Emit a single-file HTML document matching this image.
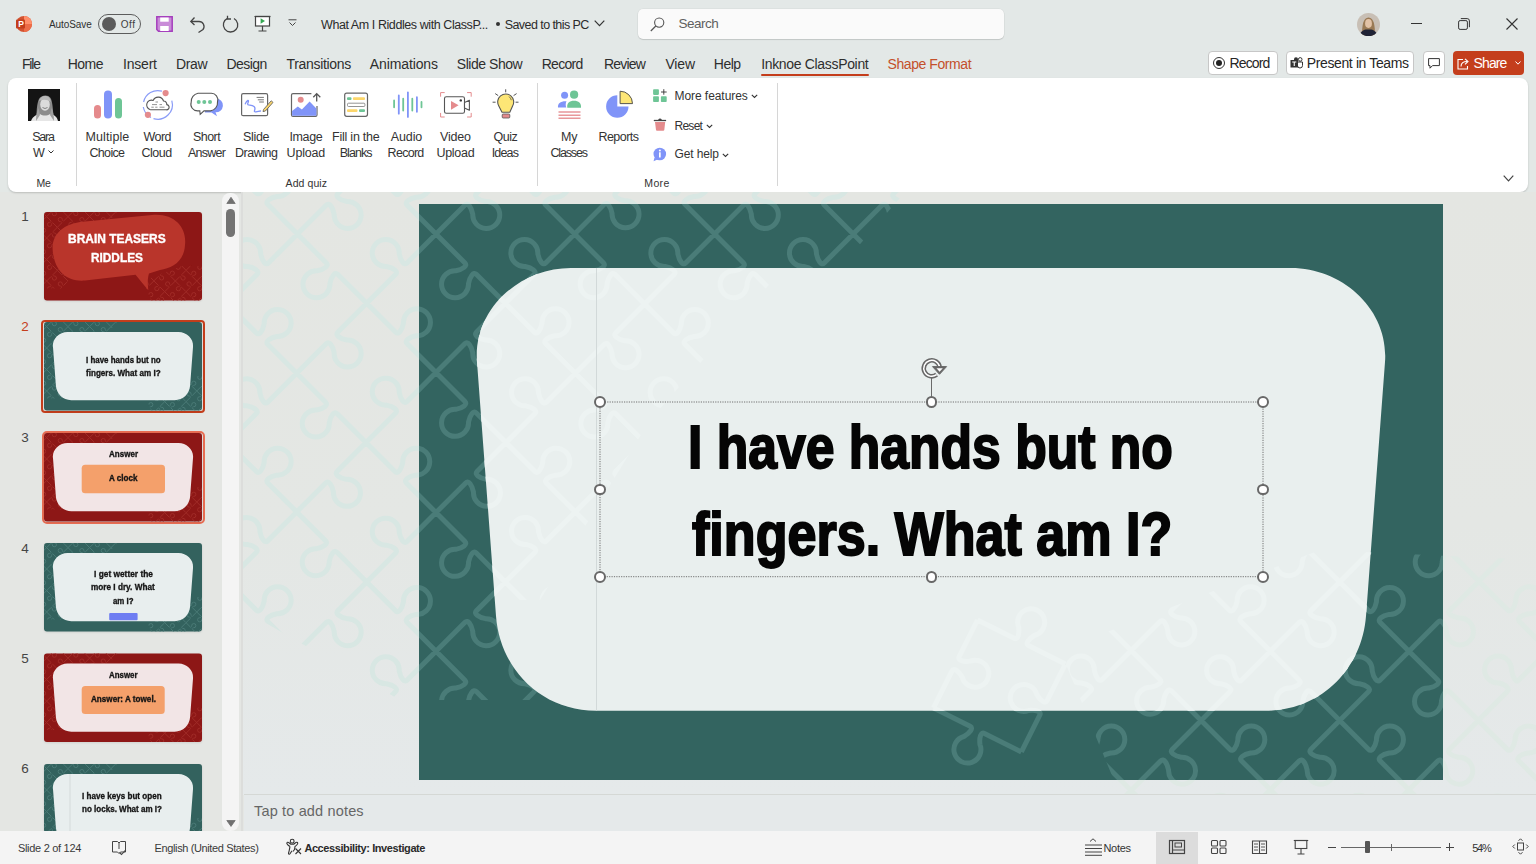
<!DOCTYPE html><html><head><meta charset="utf-8"><style>
*{margin:0;padding:0;box-sizing:border-box}
html,body{width:1536px;height:864px;overflow:hidden;background:#e3e8e6;font-family:"Liberation Sans",sans-serif}
.t{position:absolute;white-space:nowrap}
.a{position:absolute}
svg{position:absolute;overflow:visible}
</style></head><body>
<div class="a" style="left:0;top:0;width:1536px;height:80px;background:#e3e8e7"></div>
<div class="a" style="left:0;top:192px;width:244px;height:640px;background:#e4e6e3"></div>
<div class="a" style="left:244px;top:192px;width:1292px;height:640px;background:#e6e8e4"></div>
<div class="a" style="left:8px;top:78px;width:1520px;height:114px;background:#fff;border-radius:8px;box-shadow:0 1px 2px rgba(0,0,0,.18)"></div>
<svg style="left:16px;top:16px" width="16" height="16" viewBox="0 0 16 16">
<circle cx="8" cy="8" r="8" fill="#d35230"/>
<path d="M8 0A8 8 0 0 1 16 8H8Z" fill="#ff8f6b"/>
<path d="M16 8A8 8 0 0 1 8 16V8Z" fill="#ed6c47"/>
<rect x="0" y="3.5" width="9" height="9" rx="1" fill="#c43e1c"/>
<text x="2.2" y="11" font-size="8.5" font-weight="700" fill="#fff" font-family="Liberation Sans">P</text>
</svg>
<div class="t" style="left:49.0px;top:18px;font-size:10px;line-height:13px;letter-spacing:-0.095px;color:#303030;font-weight:400;">AutoSave</div>
<div class="a" style="left:98px;top:13.5px;width:43px;height:20px;border:1px solid #5c5c5c;border-radius:10px"></div>
<div class="a" style="left:102px;top:16.5px;width:14px;height:14px;background:#5b5b5b;border-radius:7px"></div>
<div class="t" style="left:120.8px;top:18px;font-size:10px;line-height:13px;letter-spacing:0.523px;color:#404040;font-weight:400;">Off</div>
<svg style="left:156px;top:16px" width="17" height="16" viewBox="0 0 17 16">
<path d="M0.8 0.8H16.2V15.2H2.5L0.8 13.5Z" fill="#c98bd8" stroke="#a53fbd" stroke-width="1.5"/>
<rect x="4.2" y="1.5" width="8.5" height="4.2" fill="#fff"/>
<rect x="4.2" y="10" width="8.5" height="5" fill="#fff"/>
</svg>
<svg style="left:189px;top:15px" width="18" height="18" viewBox="0 0 18 18">
<path d="M2 6.5H10A5 5 0 0 1 14 14.5L9.5 17.5" fill="none" stroke="#444" stroke-width="1.3"/>
<path d="M5.5 2.5L1.8 6.5L5.5 10" fill="none" stroke="#444" stroke-width="1.3"/>
</svg>
<svg style="left:221px;top:15px" width="19" height="19" viewBox="0 0 19 19">
<path d="M6.5 3.3A7.2 7.2 0 1 0 13 3.5" fill="none" stroke="#444" stroke-width="1.3"/>
<path d="M6.5 0.8V4H10" fill="none" stroke="#444" stroke-width="1.3"/>
</svg>
<svg style="left:254px;top:15px" width="17" height="17" viewBox="0 0 17 17">
<rect x="1.5" y="1.5" width="14" height="9.5" fill="#fff" stroke="#444" stroke-width="1.2"/>
<path d="M0.5 1.5H16.5" stroke="#444" stroke-width="1.2"/>
<path d="M6.6 3.2L11 6L6.6 8.8Z" fill="#34a853"/>
<path d="M8.5 11V16M4.5 16H12.5" stroke="#444" stroke-width="1.2"/>
</svg>
<svg style="left:288px;top:19px" width="9" height="8" viewBox="0 0 9 8">
<path d="M0.5 0.8H8.5" stroke="#444" stroke-width="1"/>
<path d="M1.5 3.5L4.5 6.5L7.5 3.5" fill="none" stroke="#444" stroke-width="1"/>
</svg>
<div class="t" style="left:321.0px;top:17px;font-size:12.5px;line-height:16px;letter-spacing:-0.422px;color:#2b2b2b;font-weight:400;">What Am I Riddles with ClassP...</div>
<div class="a" style="left:495.5px;top:21.5px;width:4px;height:4px;border-radius:2px;background:#333"></div>
<div class="t" style="left:504.7px;top:17px;font-size:12.5px;line-height:16px;letter-spacing:-0.560px;color:#2b2b2b;font-weight:400;">Saved to this PC</div>
<svg style="left:594px;top:20px" width="11" height="7" viewBox="0 0 11 7">
<path d="M0.7 0.7L5.5 5.7L10.3 0.7" fill="none" stroke="#333" stroke-width="1.2"/></svg>
<div class="a" style="left:638px;top:9px;width:366px;height:30px;background:#fafafa;border-radius:5px;box-shadow:0 1px 1px rgba(0,0,0,.12),0 0 0 0.5px rgba(0,0,0,.06)"></div>
<svg style="left:650px;top:17px" width="15" height="15" viewBox="0 0 15 15">
<circle cx="9.2" cy="5.6" r="4.6" fill="none" stroke="#555" stroke-width="1.1"/>
<path d="M5.8 9L0.8 14" stroke="#555" stroke-width="1.2"/></svg>
<div class="t" style="left:678.4px;top:15px;font-size:13.5px;line-height:17px;letter-spacing:-0.475px;color:#606060;font-weight:400;">Search</div>
<svg style="left:1357px;top:12.5px" width="23" height="23" viewBox="0 0 23 23">
<defs><clipPath id="av"><circle cx="11.5" cy="11.5" r="11.5"/></clipPath></defs>
<g clip-path="url(#av)"><rect width="23" height="23" fill="#c8bfb5"/>
<path d="M5 23C5 12 6 5 11.5 4.5C17 5 18 12 18 23Z" fill="#9a7a55"/>
<ellipse cx="11.5" cy="10.5" rx="3.4" ry="4.4" fill="#e2c2a6"/>
<path d="M2 23C4 17 8 16 11.5 16.5C15 16 19 17 21 23Z" fill="#1f2235"/></g></svg>
<div class="a" style="left:1411px;top:23px;width:10.5px;height:1px;background:#333"></div>
<svg style="left:1458px;top:18px" width="12" height="12" viewBox="0 0 12 12">
<rect x="0.6" y="2.6" width="8.8" height="8.8" rx="1.5" fill="none" stroke="#333" stroke-width="1"/>
<path d="M2.8 0.6H9.2A2.2 2.2 0 0 1 11.4 2.8V9.2" fill="none" stroke="#333" stroke-width="1"/></svg>
<svg style="left:1506px;top:18px" width="12" height="12" viewBox="0 0 12 12">
<path d="M0.5 0.5L11.5 11.5M11.5 0.5L0.5 11.5" stroke="#333" stroke-width="1.1"/></svg>
<div class="t" style="left:21.9px;top:55px;font-size:14px;line-height:18px;letter-spacing:-1.153px;color:#2e2e2e;font-weight:400;">File</div>
<div class="t" style="left:67.7px;top:55px;font-size:14px;line-height:18px;letter-spacing:-0.482px;color:#2e2e2e;font-weight:400;">Home</div>
<div class="t" style="left:123.0px;top:55px;font-size:14px;line-height:18px;letter-spacing:-0.203px;color:#2e2e2e;font-weight:400;">Insert</div>
<div class="t" style="left:176.0px;top:55px;font-size:14px;line-height:18px;letter-spacing:-0.390px;color:#2e2e2e;font-weight:400;">Draw</div>
<div class="t" style="left:226.5px;top:55px;font-size:14px;line-height:18px;letter-spacing:-0.536px;color:#2e2e2e;font-weight:400;">Design</div>
<div class="t" style="left:286.5px;top:55px;font-size:14px;line-height:18px;letter-spacing:-0.315px;color:#2e2e2e;font-weight:400;">Transitions</div>
<div class="t" style="left:369.8px;top:55px;font-size:14px;line-height:18px;letter-spacing:-0.117px;color:#2e2e2e;font-weight:400;">Animations</div>
<div class="t" style="left:456.8px;top:55px;font-size:14px;line-height:18px;letter-spacing:-0.460px;color:#2e2e2e;font-weight:400;">Slide Show</div>
<div class="t" style="left:541.7px;top:55px;font-size:14px;line-height:18px;letter-spacing:-0.707px;color:#2e2e2e;font-weight:400;">Record</div>
<div class="t" style="left:604.0px;top:55px;font-size:14px;line-height:18px;letter-spacing:-0.821px;color:#2e2e2e;font-weight:400;">Review</div>
<div class="t" style="left:665.4px;top:55px;font-size:14px;line-height:18px;letter-spacing:-0.164px;color:#2e2e2e;font-weight:400;">View</div>
<div class="t" style="left:713.8px;top:55px;font-size:14px;line-height:18px;letter-spacing:-0.531px;color:#2e2e2e;font-weight:400;">Help</div>
<div class="t" style="left:761.2px;top:55px;font-size:14px;line-height:18px;letter-spacing:-0.331px;color:#2e2e2e;font-weight:400;">Inknoe ClassPoint</div>
<div class="t" style="left:887.5px;top:55px;font-size:14px;line-height:18px;letter-spacing:-0.419px;color:#c4502b;font-weight:400;">Shape Format</div>
<div class="a" style="left:761px;top:73.5px;width:108px;height:2.5px;border-radius:1px;background:#c43e1c"></div>
<div class="a" style="left:1208.3px;top:51px;width:69.40000000000009px;height:24px;background:#fff;border:1px solid #c7c7c7;border-radius:4px"></div>
<div class="a" style="left:1212.7px;top:56.8px;width:12.5px;height:12.5px;border:1.1px solid #333;border-radius:7px"></div>
<div class="a" style="left:1215.7px;top:59.8px;width:6.5px;height:6.5px;background:#222;border-radius:4px"></div>
<div class="t" style="left:1229.5px;top:54px;font-size:14px;line-height:18px;letter-spacing:-0.846px;color:#262626;font-weight:400;">Record</div>
<div class="a" style="left:1285.8px;top:51px;width:128.60000000000014px;height:24px;background:#fff;border:1px solid #c7c7c7;border-radius:4px"></div>
<svg style="left:1290px;top:57px" width="13" height="12" viewBox="0 0 13 12">
<circle cx="10.2" cy="2.4" r="1.8" fill="none" stroke="#333" stroke-width="1"/>
<path d="M7.5 5H12.5V8.5A2.5 2.5 0 0 1 7.5 8.5Z" fill="none" stroke="#333" stroke-width="1"/>
<circle cx="6" cy="2.2" r="2" fill="#333"/>
<rect x="0.5" y="3" width="7.5" height="7.5" fill="#333"/>
<path d="M2.2 5H6.3M4.25 5V9" stroke="#fff" stroke-width="1.1"/></svg>
<div class="t" style="left:1306.8px;top:54px;font-size:14px;line-height:18px;letter-spacing:-0.381px;color:#262626;font-weight:400;">Present in Teams</div>
<div class="a" style="left:1423px;top:51px;width:21.59999999999991px;height:24px;background:#fff;border:1px solid #c7c7c7;border-radius:4px"></div>
<svg style="left:1428px;top:57.5px" width="12" height="11" viewBox="0 0 12 11">
<path d="M0.6 0.6H11.4V7.6H4.5L2 10.2V7.6H0.6Z" fill="none" stroke="#333" stroke-width="1"/></svg>
<div class="a" style="left:1452.7px;top:51px;width:71px;height:24px;background:#c43e1c;border-radius:4px"></div>
<svg style="left:1457px;top:56.5px" width="13" height="13" viewBox="0 0 13 13">
<path d="M6 2.5H1V12H10.5V9" fill="none" stroke="#fff" stroke-width="1.1"/>
<path d="M4 9.5C4 6 6.5 4.5 10 4.5" fill="none" stroke="#fff" stroke-width="1.1"/>
<path d="M8 1.8L11 4.5L8 7.3" fill="none" stroke="#fff" stroke-width="1.1"/></svg>
<div class="t" style="left:1473.5px;top:54px;font-size:14px;line-height:18px;letter-spacing:-0.865px;color:#ffffff;font-weight:400;">Share</div>
<svg style="left:1514.5px;top:61px" width="6" height="4" viewBox="0 0 6 4">
<path d="M0.5 0.5L3 3.2L5.5 0.5" fill="none" stroke="#fff" stroke-width="1"/></svg>
<svg style="left:28px;top:89px" width="32" height="32" viewBox="0 0 32 32">
<rect width="32" height="32" fill="#141414"/>
<path d="M9,32C8,24 9,14 11,10C13,6 20,5 22.5,9C25,13 25,24 26,32Z" fill="#8c8c8c"/>
<ellipse cx="17" cy="15.5" rx="4.8" ry="6.2" fill="#dcdcdc"/>
<path d="M11,12C12,8 15,6.5 18,7C21,7.5 23,10 22.5,13C20,10.5 15,10 11,12Z" fill="#b8b8b8"/>
<path d="M3,32C5,27 9,25.5 12,25C15,27 19,27 22,25C25,25.5 29,27 30,32Z" fill="#e6e6e6"/>
<path d="M8,32C8,26 9,22 10.5,19L12,26ZM26,32C26,26 25,22 23.5,19L22,26Z" fill="#a0a0a0"/>
<path d="M14.5,18.5Q17,20.5 19.5,18.5" stroke="#777" stroke-width=".9" fill="none"/>
</svg>
<div class="t" style="left:32.3px;top:129px;font-size:12.5px;line-height:16px;letter-spacing:-1.268px;color:#333333;font-weight:400;">Sara</div>
<div class="t" style="left:33.0px;top:145px;font-size:12.5px;line-height:16px;letter-spacing:-0.798px;color:#333333;font-weight:400;">W</div>
<svg style="left:48px;top:150px" width="6" height="4" viewBox="0 0 6 4"><path d="M0.5 0.5L3 3L5.5 0.5" fill="none" stroke="#333" stroke-width="1"/></svg>
<div class="t" style="left:36.5px;top:176px;font-size:10.5px;line-height:14px;letter-spacing:-0.287px;color:#333;font-weight:400;">Me</div>
<div class="a" style="left:75.5px;top:83px;width:1px;height:103px;background:#d6d6d6"></div>
<div class="a" style="left:537px;top:83px;width:1px;height:103px;background:#d6d6d6"></div>
<div class="a" style="left:777px;top:83px;width:1px;height:103px;background:#d6d6d6"></div>
<svg style="left:90px;top:88px" width="36" height="34" viewBox="90 88 36 34">
<rect x="94" y="105" width="7" height="13.5" rx="3.5" fill="#e58a8c"/>
<rect x="104" y="90.4" width="8" height="28" rx="4" fill="#8094f8"/>
<rect x="115" y="98" width="7" height="20.5" rx="3.5" fill="#6ec596"/>
</svg>
<div class="t" style="left:85.5px;top:129px;font-size:12.5px;line-height:16px;letter-spacing:0.104px;color:#333333;font-weight:400;">Multiple</div>
<div class="t" style="left:89.5px;top:145px;font-size:12.5px;line-height:16px;letter-spacing:-0.682px;color:#333333;font-weight:400;">Choice</div>
<svg style="left:140px;top:88px" width="36" height="34" viewBox="140 88 36 34">
<path d="M162 91.2A14.6 14.6 0 0 0 143.6 102" fill="none" stroke="#8a9cf7" stroke-width="1.2"/>
<path d="M143.3 107A14.6 14.6 0 0 0 151 117.5" fill="none" stroke="#8a9cf7" stroke-width="1.2"/>
<path d="M153.5 118.6A14.6 14.6 0 0 0 171.8 100.6" fill="none" stroke="#8a9cf7" stroke-width="1.2"/>
<circle cx="165.6" cy="93.1" r="3.1" fill="#e48b8d"/>
<circle cx="147.9" cy="114.8" r="3.1" fill="#e48b8d"/>
<path d="M150.5 109.8H166.2A2.6 2.6 0 0 0 166.8 104.6A3.2 3.2 0 0 0 163.5 101A5.5 5.5 0 0 0 153.2 100.4A4.5 4.5 0 0 0 149.9 109.6Z" fill="#fff" stroke="#555" stroke-width="1.1"/>
<path d="M152 104.6H157M159.5 104.6H162M151.3 107.2H153.8M155.2 107.2H157.5M159.5 107.2H164.5M155.5 102H158" stroke="#777" stroke-width=".8"/>
</svg>
<div class="t" style="left:143.5px;top:129px;font-size:12.5px;line-height:16px;letter-spacing:-0.547px;color:#333333;font-weight:400;">Word</div>
<div class="t" style="left:141.4px;top:145px;font-size:12.5px;line-height:16px;letter-spacing:-0.440px;color:#333333;font-weight:400;">Cloud</div>
<svg style="left:188px;top:90px" width="38" height="30" viewBox="188 90 38 30">
<path d="M205 98.7H216A6.5 6.5 0 0 1 222.9 106A7 7 0 0 1 215.5 112.3L217 116.2L211.5 112.6H205Z" fill="#8094f8"/>
<path d="M198 93.3H211A6.5 6.5 0 0 1 217.5 101.8A8.2 8.2 0 0 1 210.5 110.9H204L200.2 114.3L199.8 110.9H197.8A6.7 6.7 0 0 1 191.2 102.1A8.3 8.3 0 0 1 198 93.3Z" fill="#fff" stroke="#555" stroke-width="1.1"/>
<circle cx="198.7" cy="101.9" r="2" fill="#6ec596"/><circle cx="204.3" cy="101.9" r="2" fill="#6ec596"/><circle cx="210" cy="101.9" r="2" fill="#6ec596"/>
</svg>
<div class="t" style="left:193.0px;top:129px;font-size:12.5px;line-height:16px;letter-spacing:-0.544px;color:#333333;font-weight:400;">Short</div>
<div class="t" style="left:188.0px;top:145px;font-size:12.5px;line-height:16px;letter-spacing:-0.737px;color:#333333;font-weight:400;">Answer</div>
<svg style="left:238px;top:90px" width="38" height="30" viewBox="238 90 38 30">
<rect x="241.6" y="93.7" width="26" height="22" rx="1.5" fill="#fff" stroke="#666" stroke-width="1.2"/>
<path d="M256.6 97.4H263.9M257.8 99.8H263.9M259.2 102H263.9" stroke="#666" stroke-width=".9"/>
<path d="M245.3 103.8C247 100 249.5 99 248 102.8C246.5 106.6 251 104 254 106.5C257 109 252 112 256 111.8C258 111.6 259 111 260.5 111" fill="none" stroke="#8094f8" stroke-width="1.3" stroke-linecap="round"/>
<path d="M263.6 109.4L271.2 100.8L273 102.4L265.4 111L263 111.6Z" fill="#fcd66b" stroke="#666" stroke-width=".9" stroke-linejoin="round"/>
</svg>
<div class="t" style="left:243.0px;top:129px;font-size:12.5px;line-height:16px;letter-spacing:-0.324px;color:#333333;font-weight:400;">Slide</div>
<div class="t" style="left:235.0px;top:145px;font-size:12.5px;line-height:16px;letter-spacing:-0.475px;color:#333333;font-weight:400;">Drawing</div>
<svg style="left:288px;top:90px" width="36" height="30" viewBox="288 90 36 30">
<path d="M311.4 93.6H293A1.5 1.5 0 0 0 291.5 95.1V115A1.5 1.5 0 0 0 293 116.4H315.6A1.5 1.5 0 0 0 317 115V106" fill="#fff" stroke="#666" stroke-width="1.2"/>
<path d="M292.1 115.8V111L297.8 106.4L301.9 109.6L309.6 101.4L316.4 108.5V115.8Z" fill="#8094f8"/>
<circle cx="300.7" cy="99.8" r="3" fill="#e48b8d"/>
<path d="M316.7 101.5V93.8M313.3 97.2L316.7 93.6L320.3 97.2" fill="none" stroke="#555" stroke-width="1.3"/>
</svg>
<div class="t" style="left:289.5px;top:129px;font-size:12.5px;line-height:16px;letter-spacing:-0.386px;color:#333333;font-weight:400;">Image</div>
<div class="t" style="left:286.6px;top:145px;font-size:12.5px;line-height:16px;letter-spacing:-0.183px;color:#333333;font-weight:400;">Upload</div>
<svg style="left:341px;top:90px" width="30" height="30" viewBox="341 90 30 30">
<rect x="344.7" y="93.1" width="22.8" height="23.2" rx="2" fill="#fff" stroke="#666" stroke-width="1.2"/>
<rect x="347" y="97.3" width="4.5" height="2.7" rx="1" fill="#6ec596"/>
<rect x="352.9" y="97.3" width="12.1" height="2.7" rx="1" fill="#fcd66b"/>
<rect x="347.5" y="103.2" width="17.4" height="3.3" rx="1" fill="#fff" stroke="#888" stroke-width=".9"/>
<rect x="347" y="109.3" width="10.5" height="2.8" rx="1" fill="#fcd66b"/>
<rect x="359" y="109.3" width="6" height="2.8" rx="1" fill="#6ec596"/>
</svg>
<div class="t" style="left:332.0px;top:129px;font-size:12.5px;line-height:16px;letter-spacing:-0.222px;color:#333333;font-weight:400;">Fill in the</div>
<div class="t" style="left:339.7px;top:145px;font-size:12.5px;line-height:16px;letter-spacing:-0.944px;color:#333333;font-weight:400;">Blanks</div>
<svg style="left:390px;top:88px" width="36" height="34" viewBox="390 88 36 34">
<g stroke-width="1.8" stroke-linecap="round">
<path d="M394.1 100.5V107.3M403.2 98.7V110.5M412.3 98.7V110.5M421.5 101.9V107.3" stroke="#6ec596"/>
<path d="M398.8 95.5V113.7M407.9 92.3V116.9M416.9 97.2V111.8" stroke="#8094f8"/>
</g></svg>
<div class="t" style="left:390.7px;top:129px;font-size:12.5px;line-height:16px;letter-spacing:-0.093px;color:#333333;font-weight:400;">Audio</div>
<div class="t" style="left:387.6px;top:145px;font-size:12.5px;line-height:16px;letter-spacing:-0.719px;color:#333333;font-weight:400;">Record</div>
<svg style="left:438px;top:90px" width="36" height="30" viewBox="438 90 36 30">
<path d="M440.6 96.7V92.6H444.7M467.1 92.6H471.2V96.7M471.2 112.9V117H467.1M444.7 117H440.6V112.9" fill="none" stroke="#e48b8d" stroke-width="1"/>
<rect x="444.5" y="96.8" width="20" height="16.5" rx="1.8" fill="#fff" stroke="#555" stroke-width="1.1"/>
<path d="M464.5 102.5L469.4 100.2V110.3L464.5 108Z" fill="#fff" stroke="#555" stroke-width="1.1" stroke-linejoin="round"/>
<path d="M451 100.9L458.6 105.3L451 109.7Z" fill="#e48b8d"/>
<circle cx="460.8" cy="100.4" r="1.2" fill="#333"/>
</svg>
<div class="t" style="left:440.0px;top:129px;font-size:12.5px;line-height:16px;letter-spacing:-0.187px;color:#333333;font-weight:400;">Video</div>
<div class="t" style="left:436.4px;top:145px;font-size:12.5px;line-height:16px;letter-spacing:-0.263px;color:#333333;font-weight:400;">Upload</div>
<svg style="left:490px;top:88px" width="32" height="32" viewBox="490 88 32 32">
<path d="M502 112.3L498.8 106A8 8 0 1 1 512.6 106L509.8 112.3Z" fill="#fde676" stroke="#555" stroke-width="1.1" stroke-linejoin="round"/>
<rect x="502.2" y="114" width="7.6" height="4" rx="1" fill="#e48b8d" stroke="#555" stroke-width=".8"/>
<path d="M505.7 89.3V92.3M492.6 102.2H495.6M515.6 102.2H518.5M495.2 93.6L498.2 95.6M516.6 93.6L513.6 95.6" stroke="#555" stroke-width="1"/>
<path d="M509 96.5Q510.8 98 511.3 100.2" stroke="#555" stroke-width=".8" fill="none"/>
</svg>
<div class="t" style="left:493.6px;top:129px;font-size:12.5px;line-height:16px;letter-spacing:-0.534px;color:#333333;font-weight:400;">Quiz</div>
<div class="t" style="left:491.7px;top:145px;font-size:12.5px;line-height:16px;letter-spacing:-0.820px;color:#333333;font-weight:400;">Ideas</div>
<div class="t" style="left:285.6px;top:176px;font-size:10.5px;line-height:14px;letter-spacing:0.077px;color:#333;font-weight:400;">Add quiz</div>
<svg style="left:555px;top:88px" width="30" height="34" viewBox="555 88 30 34">
<circle cx="564.6" cy="95.3" r="3.5" fill="#8094f8"/>
<path d="M558 107.6C557.6 103.5 560.5 101 566.5 101.3C565.5 103.3 565.5 105.8 566.3 107.6Z" fill="#8094f8"/>
<circle cx="574.1" cy="94.7" r="4.1" fill="#6ec596"/>
<path d="M567.3 107.8C566.5 103.3 569.5 100.8 574 100.8C578.5 100.8 581.5 103.3 581 107.8Z" fill="#6ec596"/>
<path d="M558.5 112H580.5M558.5 115.2H580.5M558.5 118.2H580.5" stroke="#e8979a" stroke-width="1.4"/>
</svg>
<div class="t" style="left:561.0px;top:129px;font-size:12.5px;line-height:16px;letter-spacing:-0.163px;color:#333333;font-weight:400;">My</div>
<div class="t" style="left:550.5px;top:145px;font-size:12.5px;line-height:16px;letter-spacing:-1.160px;color:#333333;font-weight:400;">Classes</div>
<svg style="left:602px;top:88px" width="34" height="34" viewBox="602 88 34 34">
<path d="M617.3 95.3A11.2 11.2 0 1 0 628.5 106.5H617.3Z" fill="#8094f8"/>
<path d="M620.1 91.2A12.4 12.4 0 0 1 632.5 103.6H620.1Z" fill="#fde676" stroke="#444" stroke-width=".9" stroke-linejoin="round"/>
</svg>
<div class="t" style="left:598.4px;top:129px;font-size:12.5px;line-height:16px;letter-spacing:-0.528px;color:#333333;font-weight:400;">Reports</div>
<svg style="left:650px;top:86px" width="20" height="80" viewBox="650 86 20 80">
<rect x="653.1" y="89.2" width="5.8" height="5.7" rx=".8" fill="#6ec596"/>
<rect x="653.1" y="96.3" width="5.8" height="5.8" rx=".8" fill="#6ec596"/>
<rect x="660.9" y="96.3" width="5.8" height="5.8" rx=".8" fill="#6ec596"/>
<path d="M663.8 89.2V94.7M661 92H666.7" stroke="#333" stroke-width=".9"/>
<path d="M653.8 120.5H666.1" stroke="#444" stroke-width="1.3"/>
<path d="M658 119.9Q660 117 662 119.9Z" fill="#444"/>
<path d="M655 122H665.2L664.3 130A1 1 0 0 1 663.3 130.8H657A1 1 0 0 1 656 130Z" fill="#e48b8d"/>
<circle cx="659.8" cy="154" r="6.3" fill="#8094f8"/>
<path d="M654.5 157.5L653.6 161.2L657.5 159.6Z" fill="#8094f8"/>
<rect x="659" y="152.3" width="1.7" height="5.2" fill="#fff"/>
<circle cx="659.85" cy="150.5" r="1" fill="#fff"/>
</svg>
<div class="t" style="left:674.5px;top:89px;font-size:12px;line-height:15px;letter-spacing:-0.061px;color:#333333;font-weight:400;">More features</div>
<div class="t" style="left:674.5px;top:119px;font-size:12px;line-height:15px;letter-spacing:-0.737px;color:#333333;font-weight:400;">Reset</div>
<div class="t" style="left:674.5px;top:147px;font-size:12px;line-height:15px;letter-spacing:-0.123px;color:#333333;font-weight:400;">Get help</div>
<svg style="left:751px;top:94px" width="7" height="5" viewBox="0 0 7 5"><path d="M0.8 0.8L3.5 3.5L6.2 0.8" fill="none" stroke="#333" stroke-width="1.1"/></svg>
<svg style="left:706px;top:123.5px" width="7" height="5" viewBox="0 0 7 5"><path d="M0.8 0.8L3.5 3.5L6.2 0.8" fill="none" stroke="#333" stroke-width="1.1"/></svg>
<svg style="left:722px;top:152.5px" width="7" height="5" viewBox="0 0 7 5"><path d="M0.8 0.8L3.5 3.5L6.2 0.8" fill="none" stroke="#333" stroke-width="1.1"/></svg>
<div class="t" style="left:644.3px;top:176px;font-size:10.5px;line-height:14px;letter-spacing:0.359px;color:#333;font-weight:400;">More</div>
<svg style="left:1502.5px;top:175px" width="11" height="7" viewBox="0 0 11 7"><path d="M0.7 0.7L5.5 5.8L10.3 0.7" fill="none" stroke="#444" stroke-width="1.2"/></svg>
<svg style="left:0;top:0" width="1536" height="864" viewBox="0 0 1536 864">
<defs>
<path id="pzp" d="M-197,-885L-156,-885C-152,-885 -153,-891 -157,-897A13.5,13.5 0 1,1 -139,-897C-143,-891 -144,-885 -140,-885L-98,-885M-98,-885L-57,-885C-53,-885 -54,-879 -58,-873A13.5,13.5 0 1,0 -40,-873C-44,-879 -45,-885 -41,-885L0,-885M0,-885L41,-885C45,-885 44,-891 40,-897A13.5,13.5 0 1,1 58,-897C54,-891 53,-885 57,-885L98,-885M98,-885L139,-885C143,-885 142,-879 138,-873A13.5,13.5 0 1,0 156,-873C152,-879 151,-885 155,-885L197,-885M197,-885L238,-885C242,-885 241,-891 237,-897A13.5,13.5 0 1,1 255,-897C251,-891 250,-885 254,-885L295,-885M295,-885L336,-885C340,-885 339,-879 335,-873A13.5,13.5 0 1,0 353,-873C349,-879 348,-885 352,-885L393,-885M393,-885L434,-885C438,-885 437,-891 433,-897A13.5,13.5 0 1,1 451,-897C447,-891 446,-885 450,-885L492,-885M492,-885L532,-885C536,-885 536,-879 532,-873A13.5,13.5 0 1,0 550,-873C546,-879 544,-885 548,-885L590,-885M590,-885L631,-885C635,-885 634,-891 630,-897A13.5,13.5 0 1,1 648,-897C644,-891 643,-885 647,-885L688,-885M688,-885L729,-885C733,-885 732,-879 728,-873A13.5,13.5 0 1,0 746,-873C742,-879 741,-885 745,-885L786,-885M786,-885L827,-885C831,-885 830,-891 826,-897A13.5,13.5 0 1,1 844,-897C840,-891 839,-885 843,-885L885,-885M885,-885L926,-885C930,-885 929,-879 925,-873A13.5,13.5 0 1,0 943,-873C939,-879 938,-885 942,-885L983,-885M983,-885L1024,-885C1028,-885 1027,-891 1023,-897A13.5,13.5 0 1,1 1041,-897C1037,-891 1036,-885 1040,-885L1081,-885M1081,-885L1122,-885C1126,-885 1125,-879 1121,-873A13.5,13.5 0 1,0 1139,-873C1135,-879 1134,-885 1138,-885L1180,-885M1180,-885L1221,-885C1225,-885 1224,-891 1220,-897A13.5,13.5 0 1,1 1238,-897C1234,-891 1233,-885 1237,-885L1278,-885M-197,-786L-156,-786C-152,-786 -153,-780 -157,-774A13.5,13.5 0 1,0 -139,-774C-143,-780 -144,-786 -140,-786L-98,-786M-98,-786L-57,-786C-53,-786 -54,-792 -58,-798A13.5,13.5 0 1,1 -40,-798C-44,-792 -45,-786 -41,-786L0,-786M0,-786L41,-786C45,-786 44,-780 40,-774A13.5,13.5 0 1,0 58,-774C54,-780 53,-786 57,-786L98,-786M98,-786L139,-786C143,-786 142,-792 138,-798A13.5,13.5 0 1,1 156,-798C152,-792 151,-786 155,-786L197,-786M197,-786L238,-786C242,-786 241,-780 237,-774A13.5,13.5 0 1,0 255,-774C251,-780 250,-786 254,-786L295,-786M295,-786L336,-786C340,-786 339,-792 335,-798A13.5,13.5 0 1,1 353,-798C349,-792 348,-786 352,-786L393,-786M393,-786L434,-786C438,-786 437,-780 433,-774A13.5,13.5 0 1,0 451,-774C447,-780 446,-786 450,-786L492,-786M492,-786L532,-786C536,-786 536,-792 532,-798A13.5,13.5 0 1,1 550,-798C546,-792 544,-786 548,-786L590,-786M590,-786L631,-786C635,-786 634,-780 630,-774A13.5,13.5 0 1,0 648,-774C644,-780 643,-786 647,-786L688,-786M688,-786L729,-786C733,-786 732,-792 728,-798A13.5,13.5 0 1,1 746,-798C742,-792 741,-786 745,-786L786,-786M786,-786L827,-786C831,-786 830,-780 826,-774A13.5,13.5 0 1,0 844,-774C840,-780 839,-786 843,-786L885,-786M885,-786L926,-786C930,-786 929,-792 925,-798A13.5,13.5 0 1,1 943,-798C939,-792 938,-786 942,-786L983,-786M983,-786L1024,-786C1028,-786 1027,-780 1023,-774A13.5,13.5 0 1,0 1041,-774C1037,-780 1036,-786 1040,-786L1081,-786M1081,-786L1122,-786C1126,-786 1125,-792 1121,-798A13.5,13.5 0 1,1 1139,-798C1135,-792 1134,-786 1138,-786L1180,-786M1180,-786L1221,-786C1225,-786 1224,-780 1220,-774A13.5,13.5 0 1,0 1238,-774C1234,-780 1233,-786 1237,-786L1278,-786M-197,-688L-156,-688C-152,-688 -153,-694 -157,-700A13.5,13.5 0 1,1 -139,-700C-143,-694 -144,-688 -140,-688L-98,-688M-98,-688L-57,-688C-53,-688 -54,-682 -58,-676A13.5,13.5 0 1,0 -40,-676C-44,-682 -45,-688 -41,-688L0,-688M0,-688L41,-688C45,-688 44,-694 40,-700A13.5,13.5 0 1,1 58,-700C54,-694 53,-688 57,-688L98,-688M98,-688L139,-688C143,-688 142,-682 138,-676A13.5,13.5 0 1,0 156,-676C152,-682 151,-688 155,-688L197,-688M197,-688L238,-688C242,-688 241,-694 237,-700A13.5,13.5 0 1,1 255,-700C251,-694 250,-688 254,-688L295,-688M295,-688L336,-688C340,-688 339,-682 335,-676A13.5,13.5 0 1,0 353,-676C349,-682 348,-688 352,-688L393,-688M393,-688L434,-688C438,-688 437,-694 433,-700A13.5,13.5 0 1,1 451,-700C447,-694 446,-688 450,-688L492,-688M492,-688L532,-688C536,-688 536,-682 532,-676A13.5,13.5 0 1,0 550,-676C546,-682 544,-688 548,-688L590,-688M590,-688L631,-688C635,-688 634,-694 630,-700A13.5,13.5 0 1,1 648,-700C644,-694 643,-688 647,-688L688,-688M688,-688L729,-688C733,-688 732,-682 728,-676A13.5,13.5 0 1,0 746,-676C742,-682 741,-688 745,-688L786,-688M786,-688L827,-688C831,-688 830,-694 826,-700A13.5,13.5 0 1,1 844,-700C840,-694 839,-688 843,-688L885,-688M885,-688L926,-688C930,-688 929,-682 925,-676A13.5,13.5 0 1,0 943,-676C939,-682 938,-688 942,-688L983,-688M983,-688L1024,-688C1028,-688 1027,-694 1023,-700A13.5,13.5 0 1,1 1041,-700C1037,-694 1036,-688 1040,-688L1081,-688M1081,-688L1122,-688C1126,-688 1125,-682 1121,-676A13.5,13.5 0 1,0 1139,-676C1135,-682 1134,-688 1138,-688L1180,-688M1180,-688L1221,-688C1225,-688 1224,-694 1220,-700A13.5,13.5 0 1,1 1238,-700C1234,-694 1233,-688 1237,-688L1278,-688M-197,-590L-156,-590C-152,-590 -153,-584 -157,-578A13.5,13.5 0 1,0 -139,-578C-143,-584 -144,-590 -140,-590L-98,-590M-98,-590L-57,-590C-53,-590 -54,-596 -58,-602A13.5,13.5 0 1,1 -40,-602C-44,-596 -45,-590 -41,-590L0,-590M0,-590L41,-590C45,-590 44,-584 40,-578A13.5,13.5 0 1,0 58,-578C54,-584 53,-590 57,-590L98,-590M98,-590L139,-590C143,-590 142,-596 138,-602A13.5,13.5 0 1,1 156,-602C152,-596 151,-590 155,-590L197,-590M197,-590L238,-590C242,-590 241,-584 237,-578A13.5,13.5 0 1,0 255,-578C251,-584 250,-590 254,-590L295,-590M295,-590L336,-590C340,-590 339,-596 335,-602A13.5,13.5 0 1,1 353,-602C349,-596 348,-590 352,-590L393,-590M393,-590L434,-590C438,-590 437,-584 433,-578A13.5,13.5 0 1,0 451,-578C447,-584 446,-590 450,-590L492,-590M492,-590L532,-590C536,-590 536,-596 532,-602A13.5,13.5 0 1,1 550,-602C546,-596 544,-590 548,-590L590,-590M590,-590L631,-590C635,-590 634,-584 630,-578A13.5,13.5 0 1,0 648,-578C644,-584 643,-590 647,-590L688,-590M688,-590L729,-590C733,-590 732,-596 728,-602A13.5,13.5 0 1,1 746,-602C742,-596 741,-590 745,-590L786,-590M786,-590L827,-590C831,-590 830,-584 826,-578A13.5,13.5 0 1,0 844,-578C840,-584 839,-590 843,-590L885,-590M885,-590L926,-590C930,-590 929,-596 925,-602A13.5,13.5 0 1,1 943,-602C939,-596 938,-590 942,-590L983,-590M983,-590L1024,-590C1028,-590 1027,-584 1023,-578A13.5,13.5 0 1,0 1041,-578C1037,-584 1036,-590 1040,-590L1081,-590M1081,-590L1122,-590C1126,-590 1125,-596 1121,-602A13.5,13.5 0 1,1 1139,-602C1135,-596 1134,-590 1138,-590L1180,-590M1180,-590L1221,-590C1225,-590 1224,-584 1220,-578A13.5,13.5 0 1,0 1238,-578C1234,-584 1233,-590 1237,-590L1278,-590M-197,-492L-156,-492C-152,-492 -153,-498 -157,-504A13.5,13.5 0 1,1 -139,-504C-143,-498 -144,-492 -140,-492L-98,-492M-98,-492L-57,-492C-53,-492 -54,-486 -58,-480A13.5,13.5 0 1,0 -40,-480C-44,-486 -45,-492 -41,-492L0,-492M0,-492L41,-492C45,-492 44,-498 40,-504A13.5,13.5 0 1,1 58,-504C54,-498 53,-492 57,-492L98,-492M98,-492L139,-492C143,-492 142,-486 138,-480A13.5,13.5 0 1,0 156,-480C152,-486 151,-492 155,-492L197,-492M197,-492L238,-492C242,-492 241,-498 237,-504A13.5,13.5 0 1,1 255,-504C251,-498 250,-492 254,-492L295,-492M295,-492L336,-492C340,-492 339,-486 335,-480A13.5,13.5 0 1,0 353,-480C349,-486 348,-492 352,-492L393,-492M393,-492L434,-492C438,-492 437,-498 433,-504A13.5,13.5 0 1,1 451,-504C447,-498 446,-492 450,-492L492,-492M492,-492L532,-492C536,-492 536,-486 532,-480A13.5,13.5 0 1,0 550,-480C546,-486 544,-492 548,-492L590,-492M590,-492L631,-492C635,-492 634,-498 630,-504A13.5,13.5 0 1,1 648,-504C644,-498 643,-492 647,-492L688,-492M688,-492L729,-492C733,-492 732,-486 728,-480A13.5,13.5 0 1,0 746,-480C742,-486 741,-492 745,-492L786,-492M786,-492L827,-492C831,-492 830,-498 826,-504A13.5,13.5 0 1,1 844,-504C840,-498 839,-492 843,-492L885,-492M885,-492L926,-492C930,-492 929,-486 925,-480A13.5,13.5 0 1,0 943,-480C939,-486 938,-492 942,-492L983,-492M983,-492L1024,-492C1028,-492 1027,-498 1023,-504A13.5,13.5 0 1,1 1041,-504C1037,-498 1036,-492 1040,-492L1081,-492M1081,-492L1122,-492C1126,-492 1125,-486 1121,-480A13.5,13.5 0 1,0 1139,-480C1135,-486 1134,-492 1138,-492L1180,-492M1180,-492L1221,-492C1225,-492 1224,-498 1220,-504A13.5,13.5 0 1,1 1238,-504C1234,-498 1233,-492 1237,-492L1278,-492M-197,-393L-156,-393C-152,-393 -153,-387 -157,-381A13.5,13.5 0 1,0 -139,-381C-143,-387 -144,-393 -140,-393L-98,-393M-98,-393L-57,-393C-53,-393 -54,-399 -58,-405A13.5,13.5 0 1,1 -40,-405C-44,-399 -45,-393 -41,-393L0,-393M0,-393L41,-393C45,-393 44,-387 40,-381A13.5,13.5 0 1,0 58,-381C54,-387 53,-393 57,-393L98,-393M98,-393L139,-393C143,-393 142,-399 138,-405A13.5,13.5 0 1,1 156,-405C152,-399 151,-393 155,-393L197,-393M197,-393L238,-393C242,-393 241,-387 237,-381A13.5,13.5 0 1,0 255,-381C251,-387 250,-393 254,-393L295,-393M295,-393L336,-393C340,-393 339,-399 335,-405A13.5,13.5 0 1,1 353,-405C349,-399 348,-393 352,-393L393,-393M393,-393L434,-393C438,-393 437,-387 433,-381A13.5,13.5 0 1,0 451,-381C447,-387 446,-393 450,-393L492,-393M492,-393L532,-393C536,-393 536,-399 532,-405A13.5,13.5 0 1,1 550,-405C546,-399 544,-393 548,-393L590,-393M590,-393L631,-393C635,-393 634,-387 630,-381A13.5,13.5 0 1,0 648,-381C644,-387 643,-393 647,-393L688,-393M688,-393L729,-393C733,-393 732,-399 728,-405A13.5,13.5 0 1,1 746,-405C742,-399 741,-393 745,-393L786,-393M786,-393L827,-393C831,-393 830,-387 826,-381A13.5,13.5 0 1,0 844,-381C840,-387 839,-393 843,-393L885,-393M885,-393L926,-393C930,-393 929,-399 925,-405A13.5,13.5 0 1,1 943,-405C939,-399 938,-393 942,-393L983,-393M983,-393L1024,-393C1028,-393 1027,-387 1023,-381A13.5,13.5 0 1,0 1041,-381C1037,-387 1036,-393 1040,-393L1081,-393M1081,-393L1122,-393C1126,-393 1125,-399 1121,-405A13.5,13.5 0 1,1 1139,-405C1135,-399 1134,-393 1138,-393L1180,-393M1180,-393L1221,-393C1225,-393 1224,-387 1220,-381A13.5,13.5 0 1,0 1238,-381C1234,-387 1233,-393 1237,-393L1278,-393M-197,-295L-156,-295C-152,-295 -153,-301 -157,-307A13.5,13.5 0 1,1 -139,-307C-143,-301 -144,-295 -140,-295L-98,-295M-98,-295L-57,-295C-53,-295 -54,-289 -58,-283A13.5,13.5 0 1,0 -40,-283C-44,-289 -45,-295 -41,-295L0,-295M0,-295L41,-295C45,-295 44,-301 40,-307A13.5,13.5 0 1,1 58,-307C54,-301 53,-295 57,-295L98,-295M98,-295L139,-295C143,-295 142,-289 138,-283A13.5,13.5 0 1,0 156,-283C152,-289 151,-295 155,-295L197,-295M197,-295L238,-295C242,-295 241,-301 237,-307A13.5,13.5 0 1,1 255,-307C251,-301 250,-295 254,-295L295,-295M295,-295L336,-295C340,-295 339,-289 335,-283A13.5,13.5 0 1,0 353,-283C349,-289 348,-295 352,-295L393,-295M393,-295L434,-295C438,-295 437,-301 433,-307A13.5,13.5 0 1,1 451,-307C447,-301 446,-295 450,-295L492,-295M492,-295L532,-295C536,-295 536,-289 532,-283A13.5,13.5 0 1,0 550,-283C546,-289 544,-295 548,-295L590,-295M590,-295L631,-295C635,-295 634,-301 630,-307A13.5,13.5 0 1,1 648,-307C644,-301 643,-295 647,-295L688,-295M688,-295L729,-295C733,-295 732,-289 728,-283A13.5,13.5 0 1,0 746,-283C742,-289 741,-295 745,-295L786,-295M786,-295L827,-295C831,-295 830,-301 826,-307A13.5,13.5 0 1,1 844,-307C840,-301 839,-295 843,-295L885,-295M885,-295L926,-295C930,-295 929,-289 925,-283A13.5,13.5 0 1,0 943,-283C939,-289 938,-295 942,-295L983,-295M983,-295L1024,-295C1028,-295 1027,-301 1023,-307A13.5,13.5 0 1,1 1041,-307C1037,-301 1036,-295 1040,-295L1081,-295M1081,-295L1122,-295C1126,-295 1125,-289 1121,-283A13.5,13.5 0 1,0 1139,-283C1135,-289 1134,-295 1138,-295L1180,-295M1180,-295L1221,-295C1225,-295 1224,-301 1220,-307A13.5,13.5 0 1,1 1238,-307C1234,-301 1233,-295 1237,-295L1278,-295M-197,-197L-156,-197C-152,-197 -153,-191 -157,-185A13.5,13.5 0 1,0 -139,-185C-143,-191 -144,-197 -140,-197L-98,-197M-98,-197L-57,-197C-53,-197 -54,-203 -58,-209A13.5,13.5 0 1,1 -40,-209C-44,-203 -45,-197 -41,-197L0,-197M0,-197L41,-197C45,-197 44,-191 40,-185A13.5,13.5 0 1,0 58,-185C54,-191 53,-197 57,-197L98,-197M98,-197L139,-197C143,-197 142,-203 138,-209A13.5,13.5 0 1,1 156,-209C152,-203 151,-197 155,-197L197,-197M197,-197L238,-197C242,-197 241,-191 237,-185A13.5,13.5 0 1,0 255,-185C251,-191 250,-197 254,-197L295,-197M295,-197L336,-197C340,-197 339,-203 335,-209A13.5,13.5 0 1,1 353,-209C349,-203 348,-197 352,-197L393,-197M393,-197L434,-197C438,-197 437,-191 433,-185A13.5,13.5 0 1,0 451,-185C447,-191 446,-197 450,-197L492,-197M492,-197L532,-197C536,-197 536,-203 532,-209A13.5,13.5 0 1,1 550,-209C546,-203 544,-197 548,-197L590,-197M590,-197L631,-197C635,-197 634,-191 630,-185A13.5,13.5 0 1,0 648,-185C644,-191 643,-197 647,-197L688,-197M688,-197L729,-197C733,-197 732,-203 728,-209A13.5,13.5 0 1,1 746,-209C742,-203 741,-197 745,-197L786,-197M786,-197L827,-197C831,-197 830,-191 826,-185A13.5,13.5 0 1,0 844,-185C840,-191 839,-197 843,-197L885,-197M885,-197L926,-197C930,-197 929,-203 925,-209A13.5,13.5 0 1,1 943,-209C939,-203 938,-197 942,-197L983,-197M983,-197L1024,-197C1028,-197 1027,-191 1023,-185A13.5,13.5 0 1,0 1041,-185C1037,-191 1036,-197 1040,-197L1081,-197M1081,-197L1122,-197C1126,-197 1125,-203 1121,-209A13.5,13.5 0 1,1 1139,-209C1135,-203 1134,-197 1138,-197L1180,-197M1180,-197L1221,-197C1225,-197 1224,-191 1220,-185A13.5,13.5 0 1,0 1238,-185C1234,-191 1233,-197 1237,-197L1278,-197M-197,-98L-156,-98C-152,-98 -153,-104 -157,-110A13.5,13.5 0 1,1 -139,-110C-143,-104 -144,-98 -140,-98L-98,-98M-98,-98L-57,-98C-53,-98 -54,-92 -58,-86A13.5,13.5 0 1,0 -40,-86C-44,-92 -45,-98 -41,-98L0,-98M0,-98L41,-98C45,-98 44,-104 40,-110A13.5,13.5 0 1,1 58,-110C54,-104 53,-98 57,-98L98,-98M98,-98L139,-98C143,-98 142,-92 138,-86A13.5,13.5 0 1,0 156,-86C152,-92 151,-98 155,-98L197,-98M197,-98L238,-98C242,-98 241,-104 237,-110A13.5,13.5 0 1,1 255,-110C251,-104 250,-98 254,-98L295,-98M295,-98L336,-98C340,-98 339,-92 335,-86A13.5,13.5 0 1,0 353,-86C349,-92 348,-98 352,-98L393,-98M393,-98L434,-98C438,-98 437,-104 433,-110A13.5,13.5 0 1,1 451,-110C447,-104 446,-98 450,-98L492,-98M492,-98L532,-98C536,-98 536,-92 532,-86A13.5,13.5 0 1,0 550,-86C546,-92 544,-98 548,-98L590,-98M590,-98L631,-98C635,-98 634,-104 630,-110A13.5,13.5 0 1,1 648,-110C644,-104 643,-98 647,-98L688,-98M688,-98L729,-98C733,-98 732,-92 728,-86A13.5,13.5 0 1,0 746,-86C742,-92 741,-98 745,-98L786,-98M786,-98L827,-98C831,-98 830,-104 826,-110A13.5,13.5 0 1,1 844,-110C840,-104 839,-98 843,-98L885,-98M885,-98L926,-98C930,-98 929,-92 925,-86A13.5,13.5 0 1,0 943,-86C939,-92 938,-98 942,-98L983,-98M983,-98L1024,-98C1028,-98 1027,-104 1023,-110A13.5,13.5 0 1,1 1041,-110C1037,-104 1036,-98 1040,-98L1081,-98M1081,-98L1122,-98C1126,-98 1125,-92 1121,-86A13.5,13.5 0 1,0 1139,-86C1135,-92 1134,-98 1138,-98L1180,-98M1180,-98L1221,-98C1225,-98 1224,-104 1220,-110A13.5,13.5 0 1,1 1238,-110C1234,-104 1233,-98 1237,-98L1278,-98M-197,0L-156,0C-152,0 -153,6 -157,12A13.5,13.5 0 1,0 -139,12C-143,6 -144,0 -140,0L-98,0M-98,0L-57,0C-53,0 -54,-6 -58,-12A13.5,13.5 0 1,1 -40,-12C-44,-6 -45,0 -41,0L0,0M0,0L41,0C45,0 44,6 40,12A13.5,13.5 0 1,0 58,12C54,6 53,0 57,0L98,0M98,0L139,0C143,0 142,-6 138,-12A13.5,13.5 0 1,1 156,-12C152,-6 151,0 155,0L197,0M197,0L238,0C242,0 241,6 237,12A13.5,13.5 0 1,0 255,12C251,6 250,0 254,0L295,0M295,0L336,0C340,0 339,-6 335,-12A13.5,13.5 0 1,1 353,-12C349,-6 348,0 352,0L393,0M393,0L434,0C438,0 437,6 433,12A13.5,13.5 0 1,0 451,12C447,6 446,0 450,0L492,0M492,0L532,0C536,0 536,-6 532,-12A13.5,13.5 0 1,1 550,-12C546,-6 544,0 548,0L590,0M590,0L631,0C635,0 634,6 630,12A13.5,13.5 0 1,0 648,12C644,6 643,0 647,0L688,0M688,0L729,0C733,0 732,-6 728,-12A13.5,13.5 0 1,1 746,-12C742,-6 741,0 745,0L786,0M786,0L827,0C831,0 830,6 826,12A13.5,13.5 0 1,0 844,12C840,6 839,0 843,0L885,0M885,0L926,0C930,0 929,-6 925,-12A13.5,13.5 0 1,1 943,-12C939,-6 938,0 942,0L983,0M983,0L1024,0C1028,0 1027,6 1023,12A13.5,13.5 0 1,0 1041,12C1037,6 1036,0 1040,0L1081,0M1081,0L1122,0C1126,0 1125,-6 1121,-12A13.5,13.5 0 1,1 1139,-12C1135,-6 1134,0 1138,0L1180,0M1180,0L1221,0C1225,0 1224,6 1220,12A13.5,13.5 0 1,0 1238,12C1234,6 1233,0 1237,0L1278,0M-197,98L-156,98C-152,98 -153,92 -157,86A13.5,13.5 0 1,1 -139,86C-143,92 -144,98 -140,98L-98,98M-98,98L-57,98C-53,98 -54,104 -58,110A13.5,13.5 0 1,0 -40,110C-44,104 -45,98 -41,98L0,98M0,98L41,98C45,98 44,92 40,86A13.5,13.5 0 1,1 58,86C54,92 53,98 57,98L98,98M98,98L139,98C143,98 142,104 138,110A13.5,13.5 0 1,0 156,110C152,104 151,98 155,98L197,98M197,98L238,98C242,98 241,92 237,86A13.5,13.5 0 1,1 255,86C251,92 250,98 254,98L295,98M295,98L336,98C340,98 339,104 335,110A13.5,13.5 0 1,0 353,110C349,104 348,98 352,98L393,98M393,98L434,98C438,98 437,92 433,86A13.5,13.5 0 1,1 451,86C447,92 446,98 450,98L492,98M492,98L532,98C536,98 536,104 532,110A13.5,13.5 0 1,0 550,110C546,104 544,98 548,98L590,98M590,98L631,98C635,98 634,92 630,86A13.5,13.5 0 1,1 648,86C644,92 643,98 647,98L688,98M688,98L729,98C733,98 732,104 728,110A13.5,13.5 0 1,0 746,110C742,104 741,98 745,98L786,98M786,98L827,98C831,98 830,92 826,86A13.5,13.5 0 1,1 844,86C840,92 839,98 843,98L885,98M885,98L926,98C930,98 929,104 925,110A13.5,13.5 0 1,0 943,110C939,104 938,98 942,98L983,98M983,98L1024,98C1028,98 1027,92 1023,86A13.5,13.5 0 1,1 1041,86C1037,92 1036,98 1040,98L1081,98M1081,98L1122,98C1126,98 1125,104 1121,110A13.5,13.5 0 1,0 1139,110C1135,104 1134,98 1138,98L1180,98M1180,98L1221,98C1225,98 1224,92 1220,86A13.5,13.5 0 1,1 1238,86C1234,92 1233,98 1237,98L1278,98M-197,197L-156,197C-152,197 -153,203 -157,209A13.5,13.5 0 1,0 -139,209C-143,203 -144,197 -140,197L-98,197M-98,197L-57,197C-53,197 -54,191 -58,185A13.5,13.5 0 1,1 -40,185C-44,191 -45,197 -41,197L0,197M0,197L41,197C45,197 44,203 40,209A13.5,13.5 0 1,0 58,209C54,203 53,197 57,197L98,197M98,197L139,197C143,197 142,191 138,185A13.5,13.5 0 1,1 156,185C152,191 151,197 155,197L197,197M197,197L238,197C242,197 241,203 237,209A13.5,13.5 0 1,0 255,209C251,203 250,197 254,197L295,197M295,197L336,197C340,197 339,191 335,185A13.5,13.5 0 1,1 353,185C349,191 348,197 352,197L393,197M393,197L434,197C438,197 437,203 433,209A13.5,13.5 0 1,0 451,209C447,203 446,197 450,197L492,197M492,197L532,197C536,197 536,191 532,185A13.5,13.5 0 1,1 550,185C546,191 544,197 548,197L590,197M590,197L631,197C635,197 634,203 630,209A13.5,13.5 0 1,0 648,209C644,203 643,197 647,197L688,197M688,197L729,197C733,197 732,191 728,185A13.5,13.5 0 1,1 746,185C742,191 741,197 745,197L786,197M786,197L827,197C831,197 830,203 826,209A13.5,13.5 0 1,0 844,209C840,203 839,197 843,197L885,197M885,197L926,197C930,197 929,191 925,185A13.5,13.5 0 1,1 943,185C939,191 938,197 942,197L983,197M983,197L1024,197C1028,197 1027,203 1023,209A13.5,13.5 0 1,0 1041,209C1037,203 1036,197 1040,197L1081,197M1081,197L1122,197C1126,197 1125,191 1121,185A13.5,13.5 0 1,1 1139,185C1135,191 1134,197 1138,197L1180,197M1180,197L1221,197C1225,197 1224,203 1220,209A13.5,13.5 0 1,0 1238,209C1234,203 1233,197 1237,197L1278,197M-197,295L-156,295C-152,295 -153,289 -157,283A13.5,13.5 0 1,1 -139,283C-143,289 -144,295 -140,295L-98,295M-98,295L-57,295C-53,295 -54,301 -58,307A13.5,13.5 0 1,0 -40,307C-44,301 -45,295 -41,295L0,295M0,295L41,295C45,295 44,289 40,283A13.5,13.5 0 1,1 58,283C54,289 53,295 57,295L98,295M98,295L139,295C143,295 142,301 138,307A13.5,13.5 0 1,0 156,307C152,301 151,295 155,295L197,295M197,295L238,295C242,295 241,289 237,283A13.5,13.5 0 1,1 255,283C251,289 250,295 254,295L295,295M295,295L336,295C340,295 339,301 335,307A13.5,13.5 0 1,0 353,307C349,301 348,295 352,295L393,295M393,295L434,295C438,295 437,289 433,283A13.5,13.5 0 1,1 451,283C447,289 446,295 450,295L492,295M492,295L532,295C536,295 536,301 532,307A13.5,13.5 0 1,0 550,307C546,301 544,295 548,295L590,295M590,295L631,295C635,295 634,289 630,283A13.5,13.5 0 1,1 648,283C644,289 643,295 647,295L688,295M688,295L729,295C733,295 732,301 728,307A13.5,13.5 0 1,0 746,307C742,301 741,295 745,295L786,295M786,295L827,295C831,295 830,289 826,283A13.5,13.5 0 1,1 844,283C840,289 839,295 843,295L885,295M885,295L926,295C930,295 929,301 925,307A13.5,13.5 0 1,0 943,307C939,301 938,295 942,295L983,295M983,295L1024,295C1028,295 1027,289 1023,283A13.5,13.5 0 1,1 1041,283C1037,289 1036,295 1040,295L1081,295M1081,295L1122,295C1126,295 1125,301 1121,307A13.5,13.5 0 1,0 1139,307C1135,301 1134,295 1138,295L1180,295M1180,295L1221,295C1225,295 1224,289 1220,283A13.5,13.5 0 1,1 1238,283C1234,289 1233,295 1237,295L1278,295M-197,393L-156,393C-152,393 -153,399 -157,405A13.5,13.5 0 1,0 -139,405C-143,399 -144,393 -140,393L-98,393M-98,393L-57,393C-53,393 -54,387 -58,381A13.5,13.5 0 1,1 -40,381C-44,387 -45,393 -41,393L0,393M0,393L41,393C45,393 44,399 40,405A13.5,13.5 0 1,0 58,405C54,399 53,393 57,393L98,393M98,393L139,393C143,393 142,387 138,381A13.5,13.5 0 1,1 156,381C152,387 151,393 155,393L197,393M197,393L238,393C242,393 241,399 237,405A13.5,13.5 0 1,0 255,405C251,399 250,393 254,393L295,393M295,393L336,393C340,393 339,387 335,381A13.5,13.5 0 1,1 353,381C349,387 348,393 352,393L393,393M393,393L434,393C438,393 437,399 433,405A13.5,13.5 0 1,0 451,405C447,399 446,393 450,393L492,393M492,393L532,393C536,393 536,387 532,381A13.5,13.5 0 1,1 550,381C546,387 544,393 548,393L590,393M590,393L631,393C635,393 634,399 630,405A13.5,13.5 0 1,0 648,405C644,399 643,393 647,393L688,393M688,393L729,393C733,393 732,387 728,381A13.5,13.5 0 1,1 746,381C742,387 741,393 745,393L786,393M786,393L827,393C831,393 830,399 826,405A13.5,13.5 0 1,0 844,405C840,399 839,393 843,393L885,393M885,393L926,393C930,393 929,387 925,381A13.5,13.5 0 1,1 943,381C939,387 938,393 942,393L983,393M983,393L1024,393C1028,393 1027,399 1023,405A13.5,13.5 0 1,0 1041,405C1037,399 1036,393 1040,393L1081,393M1081,393L1122,393C1126,393 1125,387 1121,381A13.5,13.5 0 1,1 1139,381C1135,387 1134,393 1138,393L1180,393M1180,393L1221,393C1225,393 1224,399 1220,405A13.5,13.5 0 1,0 1238,405C1234,399 1233,393 1237,393L1278,393M-197,492L-156,492C-152,492 -153,486 -157,480A13.5,13.5 0 1,1 -139,480C-143,486 -144,492 -140,492L-98,492M-98,492L-57,492C-53,492 -54,498 -58,504A13.5,13.5 0 1,0 -40,504C-44,498 -45,492 -41,492L0,492M0,492L41,492C45,492 44,486 40,480A13.5,13.5 0 1,1 58,480C54,486 53,492 57,492L98,492M98,492L139,492C143,492 142,498 138,504A13.5,13.5 0 1,0 156,504C152,498 151,492 155,492L197,492M197,492L238,492C242,492 241,486 237,480A13.5,13.5 0 1,1 255,480C251,486 250,492 254,492L295,492M295,492L336,492C340,492 339,498 335,504A13.5,13.5 0 1,0 353,504C349,498 348,492 352,492L393,492M393,492L434,492C438,492 437,486 433,480A13.5,13.5 0 1,1 451,480C447,486 446,492 450,492L492,492M492,492L532,492C536,492 536,498 532,504A13.5,13.5 0 1,0 550,504C546,498 544,492 548,492L590,492M590,492L631,492C635,492 634,486 630,480A13.5,13.5 0 1,1 648,480C644,486 643,492 647,492L688,492M688,492L729,492C733,492 732,498 728,504A13.5,13.5 0 1,0 746,504C742,498 741,492 745,492L786,492M786,492L827,492C831,492 830,486 826,480A13.5,13.5 0 1,1 844,480C840,486 839,492 843,492L885,492M885,492L926,492C930,492 929,498 925,504A13.5,13.5 0 1,0 943,504C939,498 938,492 942,492L983,492M983,492L1024,492C1028,492 1027,486 1023,480A13.5,13.5 0 1,1 1041,480C1037,486 1036,492 1040,492L1081,492M1081,492L1122,492C1126,492 1125,498 1121,504A13.5,13.5 0 1,0 1139,504C1135,498 1134,492 1138,492L1180,492M1180,492L1221,492C1225,492 1224,486 1220,480A13.5,13.5 0 1,1 1238,480C1234,486 1233,492 1237,492L1278,492M-197,590L-156,590C-152,590 -153,596 -157,602A13.5,13.5 0 1,0 -139,602C-143,596 -144,590 -140,590L-98,590M-98,590L-57,590C-53,590 -54,584 -58,578A13.5,13.5 0 1,1 -40,578C-44,584 -45,590 -41,590L0,590M0,590L41,590C45,590 44,596 40,602A13.5,13.5 0 1,0 58,602C54,596 53,590 57,590L98,590M98,590L139,590C143,590 142,584 138,578A13.5,13.5 0 1,1 156,578C152,584 151,590 155,590L197,590M197,590L238,590C242,590 241,596 237,602A13.5,13.5 0 1,0 255,602C251,596 250,590 254,590L295,590M295,590L336,590C340,590 339,584 335,578A13.5,13.5 0 1,1 353,578C349,584 348,590 352,590L393,590M393,590L434,590C438,590 437,596 433,602A13.5,13.5 0 1,0 451,602C447,596 446,590 450,590L492,590M492,590L532,590C536,590 536,584 532,578A13.5,13.5 0 1,1 550,578C546,584 544,590 548,590L590,590M590,590L631,590C635,590 634,596 630,602A13.5,13.5 0 1,0 648,602C644,596 643,590 647,590L688,590M688,590L729,590C733,590 732,584 728,578A13.5,13.5 0 1,1 746,578C742,584 741,590 745,590L786,590M786,590L827,590C831,590 830,596 826,602A13.5,13.5 0 1,0 844,602C840,596 839,590 843,590L885,590M885,590L926,590C930,590 929,584 925,578A13.5,13.5 0 1,1 943,578C939,584 938,590 942,590L983,590M983,590L1024,590C1028,590 1027,596 1023,602A13.5,13.5 0 1,0 1041,602C1037,596 1036,590 1040,590L1081,590M1081,590L1122,590C1126,590 1125,584 1121,578A13.5,13.5 0 1,1 1139,578C1135,584 1134,590 1138,590L1180,590M1180,590L1221,590C1225,590 1224,596 1220,602A13.5,13.5 0 1,0 1238,602C1234,596 1233,590 1237,590L1278,590M-197,688L-156,688C-152,688 -153,682 -157,676A13.5,13.5 0 1,1 -139,676C-143,682 -144,688 -140,688L-98,688M-98,688L-57,688C-53,688 -54,694 -58,700A13.5,13.5 0 1,0 -40,700C-44,694 -45,688 -41,688L0,688M0,688L41,688C45,688 44,682 40,676A13.5,13.5 0 1,1 58,676C54,682 53,688 57,688L98,688M98,688L139,688C143,688 142,694 138,700A13.5,13.5 0 1,0 156,700C152,694 151,688 155,688L197,688M197,688L238,688C242,688 241,682 237,676A13.5,13.5 0 1,1 255,676C251,682 250,688 254,688L295,688M295,688L336,688C340,688 339,694 335,700A13.5,13.5 0 1,0 353,700C349,694 348,688 352,688L393,688M393,688L434,688C438,688 437,682 433,676A13.5,13.5 0 1,1 451,676C447,682 446,688 450,688L492,688M492,688L532,688C536,688 536,694 532,700A13.5,13.5 0 1,0 550,700C546,694 544,688 548,688L590,688M590,688L631,688C635,688 634,682 630,676A13.5,13.5 0 1,1 648,676C644,682 643,688 647,688L688,688M688,688L729,688C733,688 732,694 728,700A13.5,13.5 0 1,0 746,700C742,694 741,688 745,688L786,688M786,688L827,688C831,688 830,682 826,676A13.5,13.5 0 1,1 844,676C840,682 839,688 843,688L885,688M885,688L926,688C930,688 929,694 925,700A13.5,13.5 0 1,0 943,700C939,694 938,688 942,688L983,688M983,688L1024,688C1028,688 1027,682 1023,676A13.5,13.5 0 1,1 1041,676C1037,682 1036,688 1040,688L1081,688M1081,688L1122,688C1126,688 1125,694 1121,700A13.5,13.5 0 1,0 1139,700C1135,694 1134,688 1138,688L1180,688M1180,688L1221,688C1225,688 1224,682 1220,676A13.5,13.5 0 1,1 1238,676C1234,682 1233,688 1237,688L1278,688M-197,-885L-197,-844C-197,-840 -191,-841 -185,-845A13.5,13.5 0 1,1 -185,-827C-191,-831 -197,-832 -197,-828L-197,-786M-197,-786L-197,-745C-197,-741 -203,-742 -209,-746A13.5,13.5 0 1,0 -209,-728C-203,-732 -197,-733 -197,-729L-197,-688M-197,-688L-197,-647C-197,-643 -191,-644 -185,-648A13.5,13.5 0 1,1 -185,-630C-191,-634 -197,-635 -197,-631L-197,-590M-197,-590L-197,-549C-197,-545 -203,-546 -209,-550A13.5,13.5 0 1,0 -209,-532C-203,-536 -197,-537 -197,-533L-197,-491M-197,-492L-197,-450C-197,-446 -191,-448 -185,-452A13.5,13.5 0 1,1 -185,-434C-191,-438 -197,-438 -197,-434L-197,-393M-197,-393L-197,-352C-197,-348 -203,-349 -209,-353A13.5,13.5 0 1,0 -209,-335C-203,-339 -197,-340 -197,-336L-197,-295M-197,-295L-197,-254C-197,-250 -191,-251 -185,-255A13.5,13.5 0 1,1 -185,-237C-191,-241 -197,-242 -197,-238L-197,-197M-197,-197L-197,-156C-197,-152 -203,-153 -209,-157A13.5,13.5 0 1,0 -209,-139C-203,-143 -197,-144 -197,-140L-197,-98M-197,-98L-197,-57C-197,-53 -191,-54 -185,-58A13.5,13.5 0 1,1 -185,-40C-191,-44 -197,-45 -197,-41L-197,0M-197,0L-197,41C-197,45 -203,44 -209,40A13.5,13.5 0 1,0 -209,58C-203,54 -197,53 -197,57L-197,98M-197,98L-197,139C-197,143 -191,142 -185,138A13.5,13.5 0 1,1 -185,156C-191,152 -197,151 -197,155L-197,197M-197,197L-197,238C-197,242 -203,241 -209,237A13.5,13.5 0 1,0 -209,255C-203,251 -197,250 -197,254L-197,295M-197,295L-197,336C-197,340 -191,339 -185,335A13.5,13.5 0 1,1 -185,353C-191,349 -197,348 -197,352L-197,393M-197,393L-197,434C-197,438 -203,437 -209,433A13.5,13.5 0 1,0 -209,451C-203,447 -197,446 -197,450L-197,492M-197,492L-197,532C-197,536 -191,536 -185,532A13.5,13.5 0 1,1 -185,550C-191,546 -197,544 -197,548L-197,590M-197,590L-197,631C-197,635 -203,634 -209,630A13.5,13.5 0 1,0 -209,648C-203,644 -197,643 -197,647L-197,688M-98,-885L-98,-844C-98,-840 -104,-841 -110,-845A13.5,13.5 0 1,0 -110,-827C-104,-831 -98,-832 -98,-828L-98,-786M-98,-786L-98,-745C-98,-741 -92,-742 -86,-746A13.5,13.5 0 1,1 -86,-728C-92,-732 -98,-733 -98,-729L-98,-688M-98,-688L-98,-647C-98,-643 -104,-644 -110,-648A13.5,13.5 0 1,0 -110,-630C-104,-634 -98,-635 -98,-631L-98,-590M-98,-590L-98,-549C-98,-545 -92,-546 -86,-550A13.5,13.5 0 1,1 -86,-532C-92,-536 -98,-537 -98,-533L-98,-491M-98,-492L-98,-450C-98,-446 -104,-448 -110,-452A13.5,13.5 0 1,0 -110,-434C-104,-438 -98,-438 -98,-434L-98,-393M-98,-393L-98,-352C-98,-348 -92,-349 -86,-353A13.5,13.5 0 1,1 -86,-335C-92,-339 -98,-340 -98,-336L-98,-295M-98,-295L-98,-254C-98,-250 -104,-251 -110,-255A13.5,13.5 0 1,0 -110,-237C-104,-241 -98,-242 -98,-238L-98,-197M-98,-197L-98,-156C-98,-152 -92,-153 -86,-157A13.5,13.5 0 1,1 -86,-139C-92,-143 -98,-144 -98,-140L-98,-98M-98,-98L-98,-57C-98,-53 -104,-54 -110,-58A13.5,13.5 0 1,0 -110,-40C-104,-44 -98,-45 -98,-41L-98,0M-98,0L-98,41C-98,45 -92,44 -86,40A13.5,13.5 0 1,1 -86,58C-92,54 -98,53 -98,57L-98,98M-98,98L-98,139C-98,143 -104,142 -110,138A13.5,13.5 0 1,0 -110,156C-104,152 -98,151 -98,155L-98,197M-98,197L-98,238C-98,242 -92,241 -86,237A13.5,13.5 0 1,1 -86,255C-92,251 -98,250 -98,254L-98,295M-98,295L-98,336C-98,340 -104,339 -110,335A13.5,13.5 0 1,0 -110,353C-104,349 -98,348 -98,352L-98,393M-98,393L-98,434C-98,438 -92,437 -86,433A13.5,13.5 0 1,1 -86,451C-92,447 -98,446 -98,450L-98,492M-98,492L-98,532C-98,536 -104,536 -110,532A13.5,13.5 0 1,0 -110,550C-104,546 -98,544 -98,548L-98,590M-98,590L-98,631C-98,635 -92,634 -86,630A13.5,13.5 0 1,1 -86,648C-92,644 -98,643 -98,647L-98,688M0,-885L0,-844C0,-840 6,-841 12,-845A13.5,13.5 0 1,1 12,-827C6,-831 0,-832 0,-828L0,-786M0,-786L0,-745C0,-741 -6,-742 -12,-746A13.5,13.5 0 1,0 -12,-728C-6,-732 0,-733 0,-729L0,-688M0,-688L0,-647C0,-643 6,-644 12,-648A13.5,13.5 0 1,1 12,-630C6,-634 0,-635 0,-631L0,-590M0,-590L0,-549C0,-545 -6,-546 -12,-550A13.5,13.5 0 1,0 -12,-532C-6,-536 0,-537 0,-533L0,-491M0,-492L0,-450C0,-446 6,-448 12,-452A13.5,13.5 0 1,1 12,-434C6,-438 0,-438 0,-434L0,-393M0,-393L0,-352C0,-348 -6,-349 -12,-353A13.5,13.5 0 1,0 -12,-335C-6,-339 0,-340 0,-336L0,-295M0,-295L0,-254C0,-250 6,-251 12,-255A13.5,13.5 0 1,1 12,-237C6,-241 0,-242 0,-238L0,-197M0,-197L0,-156C0,-152 -6,-153 -12,-157A13.5,13.5 0 1,0 -12,-139C-6,-143 0,-144 0,-140L0,-98M0,-98L0,-57C0,-53 6,-54 12,-58A13.5,13.5 0 1,1 12,-40C6,-44 0,-45 0,-41L0,0M0,0L0,41C0,45 -6,44 -12,40A13.5,13.5 0 1,0 -12,58C-6,54 0,53 0,57L0,98M0,98L0,139C0,143 6,142 12,138A13.5,13.5 0 1,1 12,156C6,152 0,151 0,155L0,197M0,197L0,238C0,242 -6,241 -12,237A13.5,13.5 0 1,0 -12,255C-6,251 0,250 0,254L0,295M0,295L0,336C0,340 6,339 12,335A13.5,13.5 0 1,1 12,353C6,349 0,348 0,352L0,393M0,393L0,434C0,438 -6,437 -12,433A13.5,13.5 0 1,0 -12,451C-6,447 0,446 0,450L0,492M0,492L0,532C0,536 6,536 12,532A13.5,13.5 0 1,1 12,550C6,546 0,544 0,548L0,590M0,590L0,631C0,635 -6,634 -12,630A13.5,13.5 0 1,0 -12,648C-6,644 0,643 0,647L0,688M98,-885L98,-844C98,-840 92,-841 86,-845A13.5,13.5 0 1,0 86,-827C92,-831 98,-832 98,-828L98,-786M98,-786L98,-745C98,-741 104,-742 110,-746A13.5,13.5 0 1,1 110,-728C104,-732 98,-733 98,-729L98,-688M98,-688L98,-647C98,-643 92,-644 86,-648A13.5,13.5 0 1,0 86,-630C92,-634 98,-635 98,-631L98,-590M98,-590L98,-549C98,-545 104,-546 110,-550A13.5,13.5 0 1,1 110,-532C104,-536 98,-537 98,-533L98,-491M98,-492L98,-450C98,-446 92,-448 86,-452A13.5,13.5 0 1,0 86,-434C92,-438 98,-438 98,-434L98,-393M98,-393L98,-352C98,-348 104,-349 110,-353A13.5,13.5 0 1,1 110,-335C104,-339 98,-340 98,-336L98,-295M98,-295L98,-254C98,-250 92,-251 86,-255A13.5,13.5 0 1,0 86,-237C92,-241 98,-242 98,-238L98,-197M98,-197L98,-156C98,-152 104,-153 110,-157A13.5,13.5 0 1,1 110,-139C104,-143 98,-144 98,-140L98,-98M98,-98L98,-57C98,-53 92,-54 86,-58A13.5,13.5 0 1,0 86,-40C92,-44 98,-45 98,-41L98,0M98,0L98,41C98,45 104,44 110,40A13.5,13.5 0 1,1 110,58C104,54 98,53 98,57L98,98M98,98L98,139C98,143 92,142 86,138A13.5,13.5 0 1,0 86,156C92,152 98,151 98,155L98,197M98,197L98,238C98,242 104,241 110,237A13.5,13.5 0 1,1 110,255C104,251 98,250 98,254L98,295M98,295L98,336C98,340 92,339 86,335A13.5,13.5 0 1,0 86,353C92,349 98,348 98,352L98,393M98,393L98,434C98,438 104,437 110,433A13.5,13.5 0 1,1 110,451C104,447 98,446 98,450L98,492M98,492L98,532C98,536 92,536 86,532A13.5,13.5 0 1,0 86,550C92,546 98,544 98,548L98,590M98,590L98,631C98,635 104,634 110,630A13.5,13.5 0 1,1 110,648C104,644 98,643 98,647L98,688M197,-885L197,-844C197,-840 203,-841 209,-845A13.5,13.5 0 1,1 209,-827C203,-831 197,-832 197,-828L197,-786M197,-786L197,-745C197,-741 191,-742 185,-746A13.5,13.5 0 1,0 185,-728C191,-732 197,-733 197,-729L197,-688M197,-688L197,-647C197,-643 203,-644 209,-648A13.5,13.5 0 1,1 209,-630C203,-634 197,-635 197,-631L197,-590M197,-590L197,-549C197,-545 191,-546 185,-550A13.5,13.5 0 1,0 185,-532C191,-536 197,-537 197,-533L197,-491M197,-492L197,-450C197,-446 203,-448 209,-452A13.5,13.5 0 1,1 209,-434C203,-438 197,-438 197,-434L197,-393M197,-393L197,-352C197,-348 191,-349 185,-353A13.5,13.5 0 1,0 185,-335C191,-339 197,-340 197,-336L197,-295M197,-295L197,-254C197,-250 203,-251 209,-255A13.5,13.5 0 1,1 209,-237C203,-241 197,-242 197,-238L197,-197M197,-197L197,-156C197,-152 191,-153 185,-157A13.5,13.5 0 1,0 185,-139C191,-143 197,-144 197,-140L197,-98M197,-98L197,-57C197,-53 203,-54 209,-58A13.5,13.5 0 1,1 209,-40C203,-44 197,-45 197,-41L197,0M197,0L197,41C197,45 191,44 185,40A13.5,13.5 0 1,0 185,58C191,54 197,53 197,57L197,98M197,98L197,139C197,143 203,142 209,138A13.5,13.5 0 1,1 209,156C203,152 197,151 197,155L197,197M197,197L197,238C197,242 191,241 185,237A13.5,13.5 0 1,0 185,255C191,251 197,250 197,254L197,295M197,295L197,336C197,340 203,339 209,335A13.5,13.5 0 1,1 209,353C203,349 197,348 197,352L197,393M197,393L197,434C197,438 191,437 185,433A13.5,13.5 0 1,0 185,451C191,447 197,446 197,450L197,492M197,492L197,532C197,536 203,536 209,532A13.5,13.5 0 1,1 209,550C203,546 197,544 197,548L197,590M197,590L197,631C197,635 191,634 185,630A13.5,13.5 0 1,0 185,648C191,644 197,643 197,647L197,688M295,-885L295,-844C295,-840 289,-841 283,-845A13.5,13.5 0 1,0 283,-827C289,-831 295,-832 295,-828L295,-786M295,-786L295,-745C295,-741 301,-742 307,-746A13.5,13.5 0 1,1 307,-728C301,-732 295,-733 295,-729L295,-688M295,-688L295,-647C295,-643 289,-644 283,-648A13.5,13.5 0 1,0 283,-630C289,-634 295,-635 295,-631L295,-590M295,-590L295,-549C295,-545 301,-546 307,-550A13.5,13.5 0 1,1 307,-532C301,-536 295,-537 295,-533L295,-491M295,-492L295,-450C295,-446 289,-448 283,-452A13.5,13.5 0 1,0 283,-434C289,-438 295,-438 295,-434L295,-393M295,-393L295,-352C295,-348 301,-349 307,-353A13.5,13.5 0 1,1 307,-335C301,-339 295,-340 295,-336L295,-295M295,-295L295,-254C295,-250 289,-251 283,-255A13.5,13.5 0 1,0 283,-237C289,-241 295,-242 295,-238L295,-197M295,-197L295,-156C295,-152 301,-153 307,-157A13.5,13.5 0 1,1 307,-139C301,-143 295,-144 295,-140L295,-98M295,-98L295,-57C295,-53 289,-54 283,-58A13.5,13.5 0 1,0 283,-40C289,-44 295,-45 295,-41L295,0M295,0L295,41C295,45 301,44 307,40A13.5,13.5 0 1,1 307,58C301,54 295,53 295,57L295,98M295,98L295,139C295,143 289,142 283,138A13.5,13.5 0 1,0 283,156C289,152 295,151 295,155L295,197M295,197L295,238C295,242 301,241 307,237A13.5,13.5 0 1,1 307,255C301,251 295,250 295,254L295,295M295,295L295,336C295,340 289,339 283,335A13.5,13.5 0 1,0 283,353C289,349 295,348 295,352L295,393M295,393L295,434C295,438 301,437 307,433A13.5,13.5 0 1,1 307,451C301,447 295,446 295,450L295,492M295,492L295,532C295,536 289,536 283,532A13.5,13.5 0 1,0 283,550C289,546 295,544 295,548L295,590M295,590L295,631C295,635 301,634 307,630A13.5,13.5 0 1,1 307,648C301,644 295,643 295,647L295,688M393,-885L393,-844C393,-840 399,-841 405,-845A13.5,13.5 0 1,1 405,-827C399,-831 393,-832 393,-828L393,-786M393,-786L393,-745C393,-741 387,-742 381,-746A13.5,13.5 0 1,0 381,-728C387,-732 393,-733 393,-729L393,-688M393,-688L393,-647C393,-643 399,-644 405,-648A13.5,13.5 0 1,1 405,-630C399,-634 393,-635 393,-631L393,-590M393,-590L393,-549C393,-545 387,-546 381,-550A13.5,13.5 0 1,0 381,-532C387,-536 393,-537 393,-533L393,-491M393,-492L393,-450C393,-446 399,-448 405,-452A13.5,13.5 0 1,1 405,-434C399,-438 393,-438 393,-434L393,-393M393,-393L393,-352C393,-348 387,-349 381,-353A13.5,13.5 0 1,0 381,-335C387,-339 393,-340 393,-336L393,-295M393,-295L393,-254C393,-250 399,-251 405,-255A13.5,13.5 0 1,1 405,-237C399,-241 393,-242 393,-238L393,-197M393,-197L393,-156C393,-152 387,-153 381,-157A13.5,13.5 0 1,0 381,-139C387,-143 393,-144 393,-140L393,-98M393,-98L393,-57C393,-53 399,-54 405,-58A13.5,13.5 0 1,1 405,-40C399,-44 393,-45 393,-41L393,0M393,0L393,41C393,45 387,44 381,40A13.5,13.5 0 1,0 381,58C387,54 393,53 393,57L393,98M393,98L393,139C393,143 399,142 405,138A13.5,13.5 0 1,1 405,156C399,152 393,151 393,155L393,197M393,197L393,238C393,242 387,241 381,237A13.5,13.5 0 1,0 381,255C387,251 393,250 393,254L393,295M393,295L393,336C393,340 399,339 405,335A13.5,13.5 0 1,1 405,353C399,349 393,348 393,352L393,393M393,393L393,434C393,438 387,437 381,433A13.5,13.5 0 1,0 381,451C387,447 393,446 393,450L393,492M393,492L393,532C393,536 399,536 405,532A13.5,13.5 0 1,1 405,550C399,546 393,544 393,548L393,590M393,590L393,631C393,635 387,634 381,630A13.5,13.5 0 1,0 381,648C387,644 393,643 393,647L393,688M492,-885L492,-844C492,-840 486,-841 480,-845A13.5,13.5 0 1,0 480,-827C486,-831 492,-832 492,-828L492,-786M492,-786L492,-745C492,-741 498,-742 504,-746A13.5,13.5 0 1,1 504,-728C498,-732 492,-733 492,-729L492,-688M492,-688L492,-647C492,-643 486,-644 480,-648A13.5,13.5 0 1,0 480,-630C486,-634 492,-635 492,-631L492,-590M492,-590L492,-549C492,-545 498,-546 504,-550A13.5,13.5 0 1,1 504,-532C498,-536 492,-537 492,-533L492,-491M492,-492L492,-450C492,-446 486,-448 480,-452A13.5,13.5 0 1,0 480,-434C486,-438 492,-438 492,-434L492,-393M492,-393L492,-352C492,-348 498,-349 504,-353A13.5,13.5 0 1,1 504,-335C498,-339 492,-340 492,-336L492,-295M492,-295L492,-254C492,-250 486,-251 480,-255A13.5,13.5 0 1,0 480,-237C486,-241 492,-242 492,-238L492,-197M492,-197L492,-156C492,-152 498,-153 504,-157A13.5,13.5 0 1,1 504,-139C498,-143 492,-144 492,-140L492,-98M492,-98L492,-57C492,-53 486,-54 480,-58A13.5,13.5 0 1,0 480,-40C486,-44 492,-45 492,-41L492,0M492,0L492,41C492,45 498,44 504,40A13.5,13.5 0 1,1 504,58C498,54 492,53 492,57L492,98M492,98L492,139C492,143 486,142 480,138A13.5,13.5 0 1,0 480,156C486,152 492,151 492,155L492,197M492,197L492,238C492,242 498,241 504,237A13.5,13.5 0 1,1 504,255C498,251 492,250 492,254L492,295M492,295L492,336C492,340 486,339 480,335A13.5,13.5 0 1,0 480,353C486,349 492,348 492,352L492,393M492,393L492,434C492,438 498,437 504,433A13.5,13.5 0 1,1 504,451C498,447 492,446 492,450L492,492M492,492L492,532C492,536 486,536 480,532A13.5,13.5 0 1,0 480,550C486,546 492,544 492,548L492,590M492,590L492,631C492,635 498,634 504,630A13.5,13.5 0 1,1 504,648C498,644 492,643 492,647L492,688M590,-885L590,-844C590,-840 596,-841 602,-845A13.5,13.5 0 1,1 602,-827C596,-831 590,-832 590,-828L590,-786M590,-786L590,-745C590,-741 584,-742 578,-746A13.5,13.5 0 1,0 578,-728C584,-732 590,-733 590,-729L590,-688M590,-688L590,-647C590,-643 596,-644 602,-648A13.5,13.5 0 1,1 602,-630C596,-634 590,-635 590,-631L590,-590M590,-590L590,-549C590,-545 584,-546 578,-550A13.5,13.5 0 1,0 578,-532C584,-536 590,-537 590,-533L590,-491M590,-492L590,-450C590,-446 596,-448 602,-452A13.5,13.5 0 1,1 602,-434C596,-438 590,-438 590,-434L590,-393M590,-393L590,-352C590,-348 584,-349 578,-353A13.5,13.5 0 1,0 578,-335C584,-339 590,-340 590,-336L590,-295M590,-295L590,-254C590,-250 596,-251 602,-255A13.5,13.5 0 1,1 602,-237C596,-241 590,-242 590,-238L590,-197M590,-197L590,-156C590,-152 584,-153 578,-157A13.5,13.5 0 1,0 578,-139C584,-143 590,-144 590,-140L590,-98M590,-98L590,-57C590,-53 596,-54 602,-58A13.5,13.5 0 1,1 602,-40C596,-44 590,-45 590,-41L590,0M590,0L590,41C590,45 584,44 578,40A13.5,13.5 0 1,0 578,58C584,54 590,53 590,57L590,98M590,98L590,139C590,143 596,142 602,138A13.5,13.5 0 1,1 602,156C596,152 590,151 590,155L590,197M590,197L590,238C590,242 584,241 578,237A13.5,13.5 0 1,0 578,255C584,251 590,250 590,254L590,295M590,295L590,336C590,340 596,339 602,335A13.5,13.5 0 1,1 602,353C596,349 590,348 590,352L590,393M590,393L590,434C590,438 584,437 578,433A13.5,13.5 0 1,0 578,451C584,447 590,446 590,450L590,492M590,492L590,532C590,536 596,536 602,532A13.5,13.5 0 1,1 602,550C596,546 590,544 590,548L590,590M590,590L590,631C590,635 584,634 578,630A13.5,13.5 0 1,0 578,648C584,644 590,643 590,647L590,688M688,-885L688,-844C688,-840 682,-841 676,-845A13.5,13.5 0 1,0 676,-827C682,-831 688,-832 688,-828L688,-786M688,-786L688,-745C688,-741 694,-742 700,-746A13.5,13.5 0 1,1 700,-728C694,-732 688,-733 688,-729L688,-688M688,-688L688,-647C688,-643 682,-644 676,-648A13.5,13.5 0 1,0 676,-630C682,-634 688,-635 688,-631L688,-590M688,-590L688,-549C688,-545 694,-546 700,-550A13.5,13.5 0 1,1 700,-532C694,-536 688,-537 688,-533L688,-491M688,-492L688,-450C688,-446 682,-448 676,-452A13.5,13.5 0 1,0 676,-434C682,-438 688,-438 688,-434L688,-393M688,-393L688,-352C688,-348 694,-349 700,-353A13.5,13.5 0 1,1 700,-335C694,-339 688,-340 688,-336L688,-295M688,-295L688,-254C688,-250 682,-251 676,-255A13.5,13.5 0 1,0 676,-237C682,-241 688,-242 688,-238L688,-197M688,-197L688,-156C688,-152 694,-153 700,-157A13.5,13.5 0 1,1 700,-139C694,-143 688,-144 688,-140L688,-98M688,-98L688,-57C688,-53 682,-54 676,-58A13.5,13.5 0 1,0 676,-40C682,-44 688,-45 688,-41L688,0M688,0L688,41C688,45 694,44 700,40A13.5,13.5 0 1,1 700,58C694,54 688,53 688,57L688,98M688,98L688,139C688,143 682,142 676,138A13.5,13.5 0 1,0 676,156C682,152 688,151 688,155L688,197M688,197L688,238C688,242 694,241 700,237A13.5,13.5 0 1,1 700,255C694,251 688,250 688,254L688,295M688,295L688,336C688,340 682,339 676,335A13.5,13.5 0 1,0 676,353C682,349 688,348 688,352L688,393M688,393L688,434C688,438 694,437 700,433A13.5,13.5 0 1,1 700,451C694,447 688,446 688,450L688,492M688,492L688,532C688,536 682,536 676,532A13.5,13.5 0 1,0 676,550C682,546 688,544 688,548L688,590M688,590L688,631C688,635 694,634 700,630A13.5,13.5 0 1,1 700,648C694,644 688,643 688,647L688,688M786,-885L786,-844C786,-840 792,-841 798,-845A13.5,13.5 0 1,1 798,-827C792,-831 786,-832 786,-828L786,-786M786,-786L786,-745C786,-741 780,-742 774,-746A13.5,13.5 0 1,0 774,-728C780,-732 786,-733 786,-729L786,-688M786,-688L786,-647C786,-643 792,-644 798,-648A13.5,13.5 0 1,1 798,-630C792,-634 786,-635 786,-631L786,-590M786,-590L786,-549C786,-545 780,-546 774,-550A13.5,13.5 0 1,0 774,-532C780,-536 786,-537 786,-533L786,-491M786,-492L786,-450C786,-446 792,-448 798,-452A13.5,13.5 0 1,1 798,-434C792,-438 786,-438 786,-434L786,-393M786,-393L786,-352C786,-348 780,-349 774,-353A13.5,13.5 0 1,0 774,-335C780,-339 786,-340 786,-336L786,-295M786,-295L786,-254C786,-250 792,-251 798,-255A13.5,13.5 0 1,1 798,-237C792,-241 786,-242 786,-238L786,-197M786,-197L786,-156C786,-152 780,-153 774,-157A13.5,13.5 0 1,0 774,-139C780,-143 786,-144 786,-140L786,-98M786,-98L786,-57C786,-53 792,-54 798,-58A13.5,13.5 0 1,1 798,-40C792,-44 786,-45 786,-41L786,0M786,0L786,41C786,45 780,44 774,40A13.5,13.5 0 1,0 774,58C780,54 786,53 786,57L786,98M786,98L786,139C786,143 792,142 798,138A13.5,13.5 0 1,1 798,156C792,152 786,151 786,155L786,197M786,197L786,238C786,242 780,241 774,237A13.5,13.5 0 1,0 774,255C780,251 786,250 786,254L786,295M786,295L786,336C786,340 792,339 798,335A13.5,13.5 0 1,1 798,353C792,349 786,348 786,352L786,393M786,393L786,434C786,438 780,437 774,433A13.5,13.5 0 1,0 774,451C780,447 786,446 786,450L786,492M786,492L786,532C786,536 792,536 798,532A13.5,13.5 0 1,1 798,550C792,546 786,544 786,548L786,590M786,590L786,631C786,635 780,634 774,630A13.5,13.5 0 1,0 774,648C780,644 786,643 786,647L786,688M885,-885L885,-844C885,-840 879,-841 873,-845A13.5,13.5 0 1,0 873,-827C879,-831 885,-832 885,-828L885,-786M885,-786L885,-745C885,-741 891,-742 897,-746A13.5,13.5 0 1,1 897,-728C891,-732 885,-733 885,-729L885,-688M885,-688L885,-647C885,-643 879,-644 873,-648A13.5,13.5 0 1,0 873,-630C879,-634 885,-635 885,-631L885,-590M885,-590L885,-549C885,-545 891,-546 897,-550A13.5,13.5 0 1,1 897,-532C891,-536 885,-537 885,-533L885,-491M885,-492L885,-450C885,-446 879,-448 873,-452A13.5,13.5 0 1,0 873,-434C879,-438 885,-438 885,-434L885,-393M885,-393L885,-352C885,-348 891,-349 897,-353A13.5,13.5 0 1,1 897,-335C891,-339 885,-340 885,-336L885,-295M885,-295L885,-254C885,-250 879,-251 873,-255A13.5,13.5 0 1,0 873,-237C879,-241 885,-242 885,-238L885,-197M885,-197L885,-156C885,-152 891,-153 897,-157A13.5,13.5 0 1,1 897,-139C891,-143 885,-144 885,-140L885,-98M885,-98L885,-57C885,-53 879,-54 873,-58A13.5,13.5 0 1,0 873,-40C879,-44 885,-45 885,-41L885,0M885,0L885,41C885,45 891,44 897,40A13.5,13.5 0 1,1 897,58C891,54 885,53 885,57L885,98M885,98L885,139C885,143 879,142 873,138A13.5,13.5 0 1,0 873,156C879,152 885,151 885,155L885,197M885,197L885,238C885,242 891,241 897,237A13.5,13.5 0 1,1 897,255C891,251 885,250 885,254L885,295M885,295L885,336C885,340 879,339 873,335A13.5,13.5 0 1,0 873,353C879,349 885,348 885,352L885,393M885,393L885,434C885,438 891,437 897,433A13.5,13.5 0 1,1 897,451C891,447 885,446 885,450L885,492M885,492L885,532C885,536 879,536 873,532A13.5,13.5 0 1,0 873,550C879,546 885,544 885,548L885,590M885,590L885,631C885,635 891,634 897,630A13.5,13.5 0 1,1 897,648C891,644 885,643 885,647L885,688M983,-885L983,-844C983,-840 989,-841 995,-845A13.5,13.5 0 1,1 995,-827C989,-831 983,-832 983,-828L983,-786M983,-786L983,-745C983,-741 977,-742 971,-746A13.5,13.5 0 1,0 971,-728C977,-732 983,-733 983,-729L983,-688M983,-688L983,-647C983,-643 989,-644 995,-648A13.5,13.5 0 1,1 995,-630C989,-634 983,-635 983,-631L983,-590M983,-590L983,-549C983,-545 977,-546 971,-550A13.5,13.5 0 1,0 971,-532C977,-536 983,-537 983,-533L983,-491M983,-492L983,-450C983,-446 989,-448 995,-452A13.5,13.5 0 1,1 995,-434C989,-438 983,-438 983,-434L983,-393M983,-393L983,-352C983,-348 977,-349 971,-353A13.5,13.5 0 1,0 971,-335C977,-339 983,-340 983,-336L983,-295M983,-295L983,-254C983,-250 989,-251 995,-255A13.5,13.5 0 1,1 995,-237C989,-241 983,-242 983,-238L983,-197M983,-197L983,-156C983,-152 977,-153 971,-157A13.5,13.5 0 1,0 971,-139C977,-143 983,-144 983,-140L983,-98M983,-98L983,-57C983,-53 989,-54 995,-58A13.5,13.5 0 1,1 995,-40C989,-44 983,-45 983,-41L983,0M983,0L983,41C983,45 977,44 971,40A13.5,13.5 0 1,0 971,58C977,54 983,53 983,57L983,98M983,98L983,139C983,143 989,142 995,138A13.5,13.5 0 1,1 995,156C989,152 983,151 983,155L983,197M983,197L983,238C983,242 977,241 971,237A13.5,13.5 0 1,0 971,255C977,251 983,250 983,254L983,295M983,295L983,336C983,340 989,339 995,335A13.5,13.5 0 1,1 995,353C989,349 983,348 983,352L983,393M983,393L983,434C983,438 977,437 971,433A13.5,13.5 0 1,0 971,451C977,447 983,446 983,450L983,492M983,492L983,532C983,536 989,536 995,532A13.5,13.5 0 1,1 995,550C989,546 983,544 983,548L983,590M983,590L983,631C983,635 977,634 971,630A13.5,13.5 0 1,0 971,648C977,644 983,643 983,647L983,688M1081,-885L1081,-844C1081,-840 1075,-841 1069,-845A13.5,13.5 0 1,0 1069,-827C1075,-831 1081,-832 1081,-828L1081,-786M1081,-786L1081,-745C1081,-741 1087,-742 1093,-746A13.5,13.5 0 1,1 1093,-728C1087,-732 1081,-733 1081,-729L1081,-688M1081,-688L1081,-647C1081,-643 1075,-644 1069,-648A13.5,13.5 0 1,0 1069,-630C1075,-634 1081,-635 1081,-631L1081,-590M1081,-590L1081,-549C1081,-545 1087,-546 1093,-550A13.5,13.5 0 1,1 1093,-532C1087,-536 1081,-537 1081,-533L1081,-491M1081,-492L1081,-450C1081,-446 1075,-448 1069,-452A13.5,13.5 0 1,0 1069,-434C1075,-438 1081,-438 1081,-434L1081,-393M1081,-393L1081,-352C1081,-348 1087,-349 1093,-353A13.5,13.5 0 1,1 1093,-335C1087,-339 1081,-340 1081,-336L1081,-295M1081,-295L1081,-254C1081,-250 1075,-251 1069,-255A13.5,13.5 0 1,0 1069,-237C1075,-241 1081,-242 1081,-238L1081,-197M1081,-197L1081,-156C1081,-152 1087,-153 1093,-157A13.5,13.5 0 1,1 1093,-139C1087,-143 1081,-144 1081,-140L1081,-98M1081,-98L1081,-57C1081,-53 1075,-54 1069,-58A13.5,13.5 0 1,0 1069,-40C1075,-44 1081,-45 1081,-41L1081,0M1081,0L1081,41C1081,45 1087,44 1093,40A13.5,13.5 0 1,1 1093,58C1087,54 1081,53 1081,57L1081,98M1081,98L1081,139C1081,143 1075,142 1069,138A13.5,13.5 0 1,0 1069,156C1075,152 1081,151 1081,155L1081,197M1081,197L1081,238C1081,242 1087,241 1093,237A13.5,13.5 0 1,1 1093,255C1087,251 1081,250 1081,254L1081,295M1081,295L1081,336C1081,340 1075,339 1069,335A13.5,13.5 0 1,0 1069,353C1075,349 1081,348 1081,352L1081,393M1081,393L1081,434C1081,438 1087,437 1093,433A13.5,13.5 0 1,1 1093,451C1087,447 1081,446 1081,450L1081,492M1081,492L1081,532C1081,536 1075,536 1069,532A13.5,13.5 0 1,0 1069,550C1075,546 1081,544 1081,548L1081,590M1081,590L1081,631C1081,635 1087,634 1093,630A13.5,13.5 0 1,1 1093,648C1087,644 1081,643 1081,647L1081,688M1180,-885L1180,-844C1180,-840 1186,-841 1192,-845A13.5,13.5 0 1,1 1192,-827C1186,-831 1180,-832 1180,-828L1180,-786M1180,-786L1180,-745C1180,-741 1174,-742 1168,-746A13.5,13.5 0 1,0 1168,-728C1174,-732 1180,-733 1180,-729L1180,-688M1180,-688L1180,-647C1180,-643 1186,-644 1192,-648A13.5,13.5 0 1,1 1192,-630C1186,-634 1180,-635 1180,-631L1180,-590M1180,-590L1180,-549C1180,-545 1174,-546 1168,-550A13.5,13.5 0 1,0 1168,-532C1174,-536 1180,-537 1180,-533L1180,-491M1180,-492L1180,-450C1180,-446 1186,-448 1192,-452A13.5,13.5 0 1,1 1192,-434C1186,-438 1180,-438 1180,-434L1180,-393M1180,-393L1180,-352C1180,-348 1174,-349 1168,-353A13.5,13.5 0 1,0 1168,-335C1174,-339 1180,-340 1180,-336L1180,-295M1180,-295L1180,-254C1180,-250 1186,-251 1192,-255A13.5,13.5 0 1,1 1192,-237C1186,-241 1180,-242 1180,-238L1180,-197M1180,-197L1180,-156C1180,-152 1174,-153 1168,-157A13.5,13.5 0 1,0 1168,-139C1174,-143 1180,-144 1180,-140L1180,-98M1180,-98L1180,-57C1180,-53 1186,-54 1192,-58A13.5,13.5 0 1,1 1192,-40C1186,-44 1180,-45 1180,-41L1180,0M1180,0L1180,41C1180,45 1174,44 1168,40A13.5,13.5 0 1,0 1168,58C1174,54 1180,53 1180,57L1180,98M1180,98L1180,139C1180,143 1186,142 1192,138A13.5,13.5 0 1,1 1192,156C1186,152 1180,151 1180,155L1180,197M1180,197L1180,238C1180,242 1174,241 1168,237A13.5,13.5 0 1,0 1168,255C1174,251 1180,250 1180,254L1180,295M1180,295L1180,336C1180,340 1186,339 1192,335A13.5,13.5 0 1,1 1192,353C1186,349 1180,348 1180,352L1180,393M1180,393L1180,434C1180,438 1174,437 1168,433A13.5,13.5 0 1,0 1168,451C1174,447 1180,446 1180,450L1180,492M1180,492L1180,532C1180,536 1186,536 1192,532A13.5,13.5 0 1,1 1192,550C1186,546 1180,544 1180,548L1180,590M1180,590L1180,631C1180,635 1174,634 1168,630A13.5,13.5 0 1,0 1168,648C1174,644 1180,643 1180,647L1180,688M1278,-885L1278,-844C1278,-840 1272,-841 1266,-845A13.5,13.5 0 1,0 1266,-827C1272,-831 1278,-832 1278,-828L1278,-786M1278,-786L1278,-745C1278,-741 1284,-742 1290,-746A13.5,13.5 0 1,1 1290,-728C1284,-732 1278,-733 1278,-729L1278,-688M1278,-688L1278,-647C1278,-643 1272,-644 1266,-648A13.5,13.5 0 1,0 1266,-630C1272,-634 1278,-635 1278,-631L1278,-590M1278,-590L1278,-549C1278,-545 1284,-546 1290,-550A13.5,13.5 0 1,1 1290,-532C1284,-536 1278,-537 1278,-533L1278,-491M1278,-492L1278,-450C1278,-446 1272,-448 1266,-452A13.5,13.5 0 1,0 1266,-434C1272,-438 1278,-438 1278,-434L1278,-393M1278,-393L1278,-352C1278,-348 1284,-349 1290,-353A13.5,13.5 0 1,1 1290,-335C1284,-339 1278,-340 1278,-336L1278,-295M1278,-295L1278,-254C1278,-250 1272,-251 1266,-255A13.5,13.5 0 1,0 1266,-237C1272,-241 1278,-242 1278,-238L1278,-197M1278,-197L1278,-156C1278,-152 1284,-153 1290,-157A13.5,13.5 0 1,1 1290,-139C1284,-143 1278,-144 1278,-140L1278,-98M1278,-98L1278,-57C1278,-53 1272,-54 1266,-58A13.5,13.5 0 1,0 1266,-40C1272,-44 1278,-45 1278,-41L1278,0M1278,0L1278,41C1278,45 1284,44 1290,40A13.5,13.5 0 1,1 1290,58C1284,54 1278,53 1278,57L1278,98M1278,98L1278,139C1278,143 1272,142 1266,138A13.5,13.5 0 1,0 1266,156C1272,152 1278,151 1278,155L1278,197M1278,197L1278,238C1278,242 1284,241 1290,237A13.5,13.5 0 1,1 1290,255C1284,251 1278,250 1278,254L1278,295M1278,295L1278,336C1278,340 1272,339 1266,335A13.5,13.5 0 1,0 1266,353C1272,349 1278,348 1278,352L1278,393M1278,393L1278,434C1278,438 1284,437 1290,433A13.5,13.5 0 1,1 1290,451C1284,447 1278,446 1278,450L1278,492M1278,492L1278,532C1278,536 1272,536 1266,532A13.5,13.5 0 1,0 1266,550C1272,546 1278,544 1278,548L1278,590M1278,590L1278,631C1278,635 1284,634 1290,630A13.5,13.5 0 1,1 1290,648C1284,644 1278,643 1278,647L1278,688" fill="none"/>
<linearGradient id="ebg" x1="0" y1="0" x2="0" y2="1"><stop offset="0" stop-color="#e4e6e2"/><stop offset="0.55" stop-color="#e4e7e4"/><stop offset="1" stop-color="#e5e9ea"/></linearGradient>
<clipPath id="edit"><rect x="243" y="192" width="1293" height="603"/></clipPath>
<clipPath id="reg"><polygon points="243,192 905,192 700,430 545,700 400,700 243,610"/><polygon points="1536,560 1536,795 1120,795 1060,650 1320,550"/></clipPath>
<clipPath id="regL"><polygon points="243,192 905,192 700,430 545,700 400,700 243,610"/></clipPath><clipPath id="regR"><polygon points="1536,560 1536,795 1120,795 1060,650 1320,550"/></clipPath>
<clipPath id="regC"><polygon points="419,204 840,204 650,420 540,600 419,600"/><polygon points="1536,560 1536,795 1120,795 1060,650 1320,550"/></clipPath>
<clipPath id="slide"><rect x="419" y="204" width="1024" height="576"/></clipPath>
<clipPath id="card"><path d="M571.00,268.00H1291.00C1343.00,268.00 1389.00,310.00 1385.00,362.00L1366.00,616.00C1362.00,669.00 1321.00,710.70 1266.00,710.70H596.00C541.00,710.70 500.00,669.00 496.00,616.00L477.00,362.00C473.00,310.00 519.00,268.00 571.00,268.00Z"/></clipPath>
</defs>
<g clip-path="url(#edit)">
<rect x="243" y="192" width="1293" height="603" fill="url(#ebg)"/>
<g clip-path="url(#regL)"><g transform="translate(436,234) rotate(45)"><use href="#pzp" stroke="#d8e7e3" stroke-width="5"/></g></g>
<g clip-path="url(#regR)"><g transform="translate(436,234) rotate(45)"><use href="#pzp" stroke="#dfe9e4" stroke-width="5"/></g></g>
<rect x="419" y="204" width="1024" height="576" fill="#336460"/>
<g clip-path="url(#reg)"><g clip-path="url(#slide)"><g transform="translate(436,234) rotate(45)"><use href="#pzp" stroke="#4a7c78" stroke-width="5"/></g></g></g>
<g clip-path="url(#slide)"><path d="M0.0,0.0L41.0,0.0C45.0,0.0 44.0,-6.0 40.0,-12.0A13.5,13.5 0 1,1 58.0,-12.0C54.0,-6.0 53.0,0.0 57.0,0.0L98.3,0.0M0.0,98.3L41.0,98.3C45.0,98.3 44.0,104.3 40.0,110.3A13.5,13.5 0 1,0 58.0,110.3C54.0,104.3 53.0,98.3 57.0,98.3L98.3,98.3M0.0,0.0L0.0,41.0C0.0,45.0 6.0,44.0 12.0,40.0A13.5,13.5 0 1,1 12.0,58.0C6.0,54.0 0.0,53.0 0.0,57.0L0.0,98.3M98.3,0.0L98.3,41.0C98.3,45.0 92.3,44.0 86.3,40.0A13.5,13.5 0 1,0 86.3,58.0C92.3,54.0 98.3,53.0 98.3,57.0L98.3,98.3" transform="translate(977.5,620) rotate(26.6)" fill="none" stroke="#4a7c78" stroke-width="5"/></g>
<path d="M571.00,268.00H1291.00C1343.00,268.00 1389.00,310.00 1385.00,362.00L1366.00,616.00C1362.00,669.00 1321.00,710.70 1266.00,710.70H596.00C541.00,710.70 500.00,669.00 496.00,616.00L477.00,362.00C473.00,310.00 519.00,268.00 571.00,268.00Z" fill="#e9efee"/>
<g clip-path="url(#card)"><g clip-path="url(#regC)"><g transform="translate(436,234) rotate(45)"><use href="#pzp" stroke="#edf3f2" stroke-width="5"/></g></g></g>
<g clip-path="url(#card)"><path d="M0.0,0.0L41.0,0.0C45.0,0.0 44.0,-6.0 40.0,-12.0A13.5,13.5 0 1,1 58.0,-12.0C54.0,-6.0 53.0,0.0 57.0,0.0L98.3,0.0M0.0,98.3L41.0,98.3C45.0,98.3 44.0,104.3 40.0,110.3A13.5,13.5 0 1,0 58.0,110.3C54.0,104.3 53.0,98.3 57.0,98.3L98.3,98.3M0.0,0.0L0.0,41.0C0.0,45.0 6.0,44.0 12.0,40.0A13.5,13.5 0 1,1 12.0,58.0C6.0,54.0 0.0,53.0 0.0,57.0L0.0,98.3M98.3,0.0L98.3,41.0C98.3,45.0 92.3,44.0 86.3,40.0A13.5,13.5 0 1,0 86.3,58.0C92.3,54.0 98.3,53.0 98.3,57.0L98.3,98.3" transform="translate(977.5,620) rotate(26.6)" fill="none" stroke="#edf3f2" stroke-width="5"/></g>
<path d="M596.5,268V710.5" stroke="#d2d9d9" stroke-width="1"/>
<rect x="600" y="402" width="663" height="174.7" fill="none" stroke="#707070" stroke-width="1" stroke-dasharray="1.2,1.2"/>
</g>
</svg>
<svg style="left:919px;top:356px" width="32" height="26" viewBox="919 356 32 26">
<path d="M939.7,367.2A8,8 0 1,0 936.6,374.7" fill="none" stroke="#676767" stroke-width="4.6"/>
<path d="M939.7,367.2A8,8 0 1,0 936.6,374.7" fill="none" stroke="#fff" stroke-width="1.5"/>
<path d="M932.5,366.6H946.6L939.5,374.3Z" fill="#676767" stroke="#676767" stroke-width="1" stroke-linejoin="round"/>
<path d="M936.5,368.3H942.8L939.6,371.7Z" fill="#fff"/>
</svg>
<div class="a" style="left:931px;top:377px;width:1.2px;height:25px;background:#6a6a6a"></div>
<div class="a" style="left:594.1px;top:396.3px;width:11.6px;height:11.6px;border-radius:6px;background:#fff;border:2px solid #686868"></div>
<div class="a" style="left:925.6px;top:396.3px;width:11.6px;height:11.6px;border-radius:6px;background:#fff;border:2px solid #686868"></div>
<div class="a" style="left:1257.1px;top:396.3px;width:11.6px;height:11.6px;border-radius:6px;background:#fff;border:2px solid #686868"></div>
<div class="a" style="left:594.1px;top:483.7px;width:11.6px;height:11.6px;border-radius:6px;background:#fff;border:2px solid #686868"></div>
<div class="a" style="left:1257.1px;top:483.7px;width:11.6px;height:11.6px;border-radius:6px;background:#fff;border:2px solid #686868"></div>
<div class="a" style="left:594.1px;top:571.0px;width:11.6px;height:11.6px;border-radius:6px;background:#fff;border:2px solid #686868"></div>
<div class="a" style="left:925.6px;top:571.0px;width:11.6px;height:11.6px;border-radius:6px;background:#fff;border:2px solid #686868"></div>
<div class="a" style="left:1257.1px;top:571.0px;width:11.6px;height:11.6px;border-radius:6px;background:#fff;border:2px solid #686868"></div>
<div class="t" style="left:687.5px;top:417.8px;font-size:60.2px;line-height:60.2px;font-weight:700;color:#050505;transform-origin:0 0;transform:scaleX(0.8580);-webkit-text-stroke:2px #050505">I have hands but no</div>
<div class="t" style="left:692.1px;top:504.6px;font-size:60.2px;line-height:60.2px;font-weight:700;color:#050505;transform-origin:0 0;transform:scaleX(0.8654);-webkit-text-stroke:2px #050505">fingers. What am I?</div>
<div class="a" style="left:241px;top:192px;width:2px;height:639px;background:#dcdddb"></div>
<div class="a" style="left:222.4px;top:193px;width:16.6px;height:637.5px;background:#f4f4f4;border-radius:8px"></div>
<svg style="left:226px;top:197px" width="10" height="7" viewBox="0 0 10 7"><path d="M5,0.3L9.2,6.5H0.8Z" fill="#707070" stroke="#707070" stroke-width=".8" stroke-linejoin="round"/></svg>
<div class="a" style="left:226.2px;top:209px;width:8.8px;height:27.7px;background:#737373;border-radius:4.4px"></div>
<svg style="left:226px;top:819.5px" width="10" height="7" viewBox="0 0 10 7"><path d="M0.8,0.5H9.2L5,6.4Z" fill="#707070" stroke="#707070" stroke-width=".8" stroke-linejoin="round"/></svg>
<div class="t" style="left:21.3px;top:208px;font-size:13.5px;line-height:17px;letter-spacing:-2.208px;color:#454545;font-weight:400;">1</div>
<div class="t" style="left:21.3px;top:318px;font-size:13.5px;line-height:17px;letter-spacing:-2.208px;color:#c43e1c;font-weight:400;">2</div>
<div class="t" style="left:21.3px;top:429px;font-size:13.5px;line-height:17px;letter-spacing:-2.208px;color:#454545;font-weight:400;">3</div>
<div class="t" style="left:21.3px;top:540px;font-size:13.5px;line-height:17px;letter-spacing:-2.208px;color:#454545;font-weight:400;">4</div>
<div class="t" style="left:21.3px;top:650px;font-size:13.5px;line-height:17px;letter-spacing:-2.208px;color:#454545;font-weight:400;">5</div>
<div class="t" style="left:21.3px;top:760px;font-size:13.5px;line-height:17px;letter-spacing:-2.208px;color:#454545;font-weight:400;">6</div>
<div class="a" style="left:41.3px;top:319.7px;width:164.2px;height:93.3px;border:2px solid #c43e1c;border-radius:4px"></div>
<div class="a" style="left:41.5px;top:430.6px;width:163.5px;height:93.4px;border:2.6px solid #e86d53;border-radius:5px"></div>
<svg style="left:0;top:192px" width="222" height="639" viewBox="0 192 222 639"><defs><filter id="tsh" x="-10%" y="-10%" width="120%" height="130%"><feGaussianBlur stdDeviation="1"/></filter></defs><rect x="44" y="212.8" width="158" height="88.5" rx="3" fill="#000" opacity=".10" filter="url(#tsh)"/><rect x="44" y="212" width="158" height="88.5" rx="3" fill="#8d1716"/><clipPath id="tr212"><polygon points="16.8,210.1 119.0,210.1 87.4,246.9 63.4,288.5 41.1,288.5 16.8,274.6"/><polygon points="216.4,266.9 216.4,303.2 152.2,303.2 142.9,280.8 183.0,265.4"/></clipPath><clipPath id="tc212"><rect x="44" y="212" width="158" height="88.5" rx="3"/></clipPath><g clip-path="url(#tc212)"><g clip-path="url(#tr212)"><g transform="translate(44,212) scale(0.1543) translate(17,30) rotate(45)"><use href="#pzp" stroke="#a12d29" stroke-width="6" /></g></g></g><path d="M54,258C49,240 57,226 80,222L152,215C175,213 187,228 185,245C184,262 172,268 160,270L149,273.5C147,280 148,286 148.3,290.2C143,284 139,279 135.5,274.7L85,280.5C68,282 57,272 54,258Z" fill="#b9352b"/><rect x="44" y="322.8" width="158" height="88.5" rx="3" fill="#000" opacity=".10" filter="url(#tsh)"/><rect x="44" y="322" width="158" height="88.5" rx="3" fill="#33625e"/><clipPath id="tr322"><polygon points="16.8,320.1 119.0,320.1 87.4,356.9 63.4,398.5 41.1,398.5 16.8,384.6"/><polygon points="216.4,376.9 216.4,413.2 152.2,413.2 142.9,390.8 183.0,375.4"/></clipPath><clipPath id="tc322"><rect x="44" y="322" width="158" height="88.5" rx="3"/></clipPath><g clip-path="url(#tc322)"><g clip-path="url(#tr322)"><g transform="translate(44,322) scale(0.1543) translate(17,30) rotate(45)"><use href="#pzp" stroke="#4b7b77" stroke-width="6" /></g></g></g><path d="M67.45,331.88H178.55C186.57,331.88 193.67,338.36 193.05,346.38L190.12,385.57C189.50,393.75 183.18,400.18 174.69,400.18H71.31C62.82,400.18 56.50,393.75 55.88,385.57L52.95,346.38C52.33,338.36 59.43,331.88 67.45,331.88Z" fill="#e8eeee"/><rect x="44" y="433.8" width="158" height="88.5" rx="3" fill="#000" opacity=".10" filter="url(#tsh)"/><rect x="44" y="433" width="158" height="88.5" rx="3" fill="#8d1716"/><clipPath id="tr433"><polygon points="16.8,431.1 119.0,431.1 87.4,467.9 63.4,509.5 41.1,509.5 16.8,495.6"/><polygon points="216.4,487.9 216.4,524.2 152.2,524.2 142.9,501.8 183.0,486.4"/></clipPath><clipPath id="tc433"><rect x="44" y="433" width="158" height="88.5" rx="3"/></clipPath><g clip-path="url(#tc433)"><g clip-path="url(#tr433)"><g transform="translate(44,433) scale(0.1543) translate(17,30) rotate(45)"><use href="#pzp" stroke="#a12d29" stroke-width="6" /></g></g></g><path d="M67.45,442.88H178.55C186.57,442.88 193.67,449.36 193.05,457.38L190.12,496.57C189.50,504.75 183.18,511.18 174.69,511.18H71.31C62.82,511.18 56.50,504.75 55.88,496.57L52.95,457.38C52.33,449.36 59.43,442.88 67.45,442.88Z" fill="#f2e5e6"/><rect x="81.7" y="464.7" width="83.3" height="28.5" rx="3.5" fill="#f4a06b"/><rect x="44" y="543.8" width="158" height="88.5" rx="3" fill="#000" opacity=".10" filter="url(#tsh)"/><rect x="44" y="543" width="158" height="88.5" rx="3" fill="#33625e"/><clipPath id="tr543"><polygon points="16.8,541.1 119.0,541.1 87.4,577.9 63.4,619.5 41.1,619.5 16.8,605.6"/><polygon points="216.4,597.9 216.4,634.2 152.2,634.2 142.9,611.8 183.0,596.4"/></clipPath><clipPath id="tc543"><rect x="44" y="543" width="158" height="88.5" rx="3"/></clipPath><g clip-path="url(#tc543)"><g clip-path="url(#tr543)"><g transform="translate(44,543) scale(0.1543) translate(17,30) rotate(45)"><use href="#pzp" stroke="#4b7b77" stroke-width="6" /></g></g></g><path d="M67.45,552.88H178.55C186.57,552.88 193.67,559.36 193.05,567.38L190.12,606.57C189.50,614.75 183.18,621.18 174.69,621.18H71.31C62.82,621.18 56.50,614.75 55.88,606.57L52.95,567.38C52.33,559.36 59.43,552.88 67.45,552.88Z" fill="#e8eeee"/><rect x="109.2" y="613" width="28.4" height="7.2" rx="1" fill="#6e7df2"/><rect x="44" y="654.3" width="158" height="88.5" rx="3" fill="#000" opacity=".10" filter="url(#tsh)"/><rect x="44" y="653.5" width="158" height="88.5" rx="3" fill="#8d1716"/><clipPath id="tr653"><polygon points="16.8,651.6 119.0,651.6 87.4,688.4 63.4,730.0 41.1,730.0 16.8,716.1"/><polygon points="216.4,708.4 216.4,744.7 152.2,744.7 142.9,722.3 183.0,706.9"/></clipPath><clipPath id="tc653"><rect x="44" y="653.5" width="158" height="88.5" rx="3"/></clipPath><g clip-path="url(#tc653)"><g clip-path="url(#tr653)"><g transform="translate(44,653.5) scale(0.1543) translate(17,30) rotate(45)"><use href="#pzp" stroke="#a12d29" stroke-width="6" /></g></g></g><path d="M67.45,663.38H178.55C186.57,663.38 193.67,669.86 193.05,677.88L190.12,717.07C189.50,725.25 183.18,731.68 174.69,731.68H71.31C62.82,731.68 56.50,725.25 55.88,717.07L52.95,677.88C52.33,669.86 59.43,663.38 67.45,663.38Z" fill="#f2e5e6"/><rect x="81.7" y="685.9" width="83" height="28" rx="3.5" fill="#f4a06b"/><rect x="44" y="764.8" width="158" height="88.5" rx="3" fill="#000" opacity=".10" filter="url(#tsh)"/><rect x="44" y="764" width="158" height="88.5" rx="3" fill="#33625e"/><clipPath id="tr764"><polygon points="16.8,762.1 119.0,762.1 87.4,798.9 63.4,840.5 41.1,840.5 16.8,826.6"/><polygon points="216.4,818.9 216.4,855.2 152.2,855.2 142.9,832.8 183.0,817.4"/></clipPath><clipPath id="tc764"><rect x="44" y="764" width="158" height="88.5" rx="3"/></clipPath><g clip-path="url(#tc764)"><g clip-path="url(#tr764)"><g transform="translate(44,764) scale(0.1543) translate(17,30) rotate(45)"><use href="#pzp" stroke="#4b7b77" stroke-width="6" /></g></g></g><path d="M67.45,773.88H178.55C186.57,773.88 193.67,780.36 193.05,788.38L190.12,827.57C189.50,835.75 183.18,842.18 174.69,842.18H71.31C62.82,842.18 56.50,835.75 55.88,827.57L52.95,788.38C52.33,780.36 59.43,773.88 67.45,773.88Z" fill="#e8eeee"/><path d="M70,774V831" stroke="#c8cfcf" stroke-width=".6"/></svg>
<div class="t" style="left:67.9px;top:233.0px;font-size:12px;line-height:12px;font-weight:700;color:#fff;transform-origin:0 0;transform:scaleX(0.9968);-webkit-text-stroke:0.35px #fff;transform-origin:0 100%;">BRAIN TEASERS</div>
<div class="t" style="left:90.5px;top:252.2px;font-size:12px;line-height:12px;font-weight:700;color:#fff;transform-origin:0 0;transform:scaleX(0.9854);-webkit-text-stroke:0.35px #fff;">RIDDLES</div>
<div class="t" style="left:85.7px;top:355.0px;font-size:9.5px;line-height:9.5px;font-weight:700;color:#141414;transform-origin:0 0;transform:scaleX(0.8363);-webkit-text-stroke:0.35px #141414;">I have hands but no</div>
<div class="t" style="left:85.7px;top:368.4px;font-size:9.5px;line-height:9.5px;font-weight:700;color:#141414;transform-origin:0 0;transform:scaleX(0.8514);-webkit-text-stroke:0.35px #141414;">fingers. What am I?</div>
<div class="t" style="left:108.6px;top:449.7px;font-size:9px;line-height:9px;font-weight:700;color:#141414;transform-origin:0 0;transform:scaleX(0.8920);-webkit-text-stroke:0.35px #141414;">Answer</div>
<div class="t" style="left:109.2px;top:474.2px;font-size:9px;line-height:9px;font-weight:700;color:#141414;transform-origin:0 0;transform:scaleX(0.8964);-webkit-text-stroke:0.35px #141414;">A clock</div>
<div class="t" style="left:93.7px;top:569.0px;font-size:9.5px;line-height:9.5px;font-weight:700;color:#141414;transform-origin:0 0;transform:scaleX(0.8786);-webkit-text-stroke:0.35px #141414;">I get wetter the</div>
<div class="t" style="left:91.3px;top:582.4px;font-size:9.5px;line-height:9.5px;font-weight:700;color:#141414;transform-origin:0 0;transform:scaleX(0.8641);-webkit-text-stroke:0.35px #141414;">more I dry. What</div>
<div class="t" style="left:112.6px;top:595.7px;font-size:9.5px;line-height:9.5px;font-weight:700;color:#141414;transform-origin:0 0;transform:scaleX(0.8262);-webkit-text-stroke:0.35px #141414;">am I?</div>
<div class="t" style="left:108.9px;top:670.5px;font-size:9px;line-height:9px;font-weight:700;color:#141414;transform-origin:0 0;transform:scaleX(0.8766);-webkit-text-stroke:0.35px #141414;">Answer</div>
<div class="t" style="left:90.7px;top:695.4px;font-size:9px;line-height:9px;font-weight:700;color:#141414;transform-origin:0 0;transform:scaleX(0.9034);-webkit-text-stroke:0.35px #141414;">Answer: A towel.</div>
<div class="t" style="left:82.4px;top:790.7px;font-size:9.5px;line-height:9.5px;font-weight:700;color:#141414;transform-origin:0 0;transform:scaleX(0.8518);-webkit-text-stroke:0.35px #141414;">I have keys but open</div>
<div class="t" style="left:82px;top:803.6px;font-size:9.5px;line-height:9.5px;font-weight:700;color:#141414;transform-origin:0 0;transform:scaleX(0.8467);-webkit-text-stroke:0.35px #141414;">no locks. What am I?</div>
<div class="a" style="left:244px;top:794.2px;width:1292px;height:1px;background:#d5d8d5"></div>
<div class="a" style="left:244px;top:795px;width:1292px;height:36px;background:#e5e9ea"></div>
<div class="t" style="left:254.0px;top:802px;font-size:14.5px;line-height:19px;letter-spacing:0.159px;color:#666;font-weight:400;">Tap to add notes</div>
<div class="a" style="left:0;top:831px;width:1536px;height:33px;background:#f4f4f4"></div>
<div class="t" style="left:17.9px;top:841px;font-size:11px;line-height:14px;letter-spacing:-0.290px;color:#3a3a3a;font-weight:400;">Slide 2 of 124</div>
<svg style="left:111px;top:840px" width="16" height="16" viewBox="0 0 16 16">
<path d="M1.5,1.5H6.5L8,3L9.5,1.5H14.5V12H9.5L8,13.5L6.5,12H1.5Z" fill="none" stroke="#444" stroke-width="1"/>
<path d="M8,3V9" stroke="#444" stroke-width="1"/>
<path d="M8.5,12.5L10.5,14.5L14.8,9.8" fill="none" stroke="#444" stroke-width="1.1"/></svg>
<div class="t" style="left:154.6px;top:841px;font-size:11px;line-height:14px;letter-spacing:-0.377px;color:#3a3a3a;font-weight:400;">English (United States)</div>
<svg style="left:285px;top:838px" width="18" height="18" viewBox="285 838 18 18">
<path d="M287,842.5C288.5,841.5 289.5,843.5 291,844.2L293.5,844.2C295,843.5 296,841.5 297.5,842.5C298.5,843.5 296.5,845.5 295,846.5L294.5,849.5L293,851.5M290,846.5C289.5,848.5 289.5,850.5 288.5,853.2C288.3,854.2 289.5,854.5 290,853.8L292,850.8M290,846.5C288.5,845.5 286,843.8 287,842.5" fill="none" stroke="#333" stroke-width="1.1" stroke-linejoin="round"/>
<circle cx="292.2" cy="841.2" r="1.9" fill="none" stroke="#333" stroke-width="1.1"/>
<path d="M295.5,848.5L301,854M301,848.5L295.5,854" stroke="#333" stroke-width="1.1"/>
</svg>
<div class="t" style="left:304.4px;top:841px;font-size:11px;line-height:14px;letter-spacing:-0.414px;color:#2a2a2a;font-weight:700;">Accessibility: Investigate</div>
<svg style="left:1084px;top:838px" width="19" height="18" viewBox="0 0 19 18">
<path d="M6,3.5L9,0.8L12,3.5" fill="none" stroke="#444" stroke-width="1"/>
<path d="M1,7H18M1,10.5H18M1,14H18M1,17.3H18" stroke="#444" stroke-width="1"/></svg>
<div class="t" style="left:1103.4px;top:841px;font-size:11px;line-height:14px;letter-spacing:-0.284px;color:#333;font-weight:400;">Notes</div>
<div class="a" style="left:1155.8px;top:832px;width:42px;height:32px;background:#dcdcdc"></div>
<svg style="left:1168px;top:839px" width="18" height="16" viewBox="0 0 18 16">
<rect x="1.5" y="1.5" width="15" height="13" fill="none" stroke="#444" stroke-width="1.2"/>
<path d="M4.5,1.5V14.5" stroke="#444" stroke-width="1.2"/>
<rect x="7" y="4" width="6.5" height="4" fill="none" stroke="#444" stroke-width="1"/>
<path d="M4.5,11H16.5" stroke="#444" stroke-width="1"/></svg>
<svg style="left:1210px;top:839px" width="18" height="16" viewBox="0 0 18 16">
<rect x="1.5" y="1.5" width="6" height="5.5" rx="1" fill="none" stroke="#444" stroke-width="1.1"/>
<rect x="10" y="1.5" width="6" height="5.5" rx="1" fill="none" stroke="#444" stroke-width="1.1"/>
<rect x="1.5" y="9" width="6" height="5.5" rx="1" fill="none" stroke="#444" stroke-width="1.1"/>
<rect x="10" y="9" width="6" height="5.5" rx="1" fill="none" stroke="#444" stroke-width="1.1"/></svg>
<svg style="left:1251px;top:839px" width="17" height="16" viewBox="0 0 17 16">
<path d="M1.5,2H8.5V14.5H1.5ZM8.5,2H15.5V14.5H8.5Z" fill="none" stroke="#444" stroke-width="1.1"/>
<path d="M3,5H7M3,8H7M3,11H7M10,5H14M10,8H14M10,11H14" stroke="#444" stroke-width=".9"/></svg>
<svg style="left:1293px;top:839px" width="16" height="16" viewBox="0 0 16 16">
<path d="M0.8,1.5H15.2" stroke="#444" stroke-width="1.1"/>
<rect x="2.2" y="1.5" width="11.6" height="8" fill="none" stroke="#444" stroke-width="1.1"/>
<path d="M8,9.5V15M4.5,15H11.5" stroke="#444" stroke-width="1.1"/></svg>
<div class="a" style="left:1328px;top:846.5px;width:7.5px;height:1px;background:#444"></div>
<div class="a" style="left:1341px;top:847px;width:100px;height:1px;background:#666"></div>
<div class="a" style="left:1390.5px;top:843.5px;width:1px;height:7px;background:#666"></div>
<div class="a" style="left:1364.8px;top:841.2px;width:5px;height:12px;background:#555;border-radius:1px"></div>
<div class="a" style="left:1445.5px;top:846.5px;width:8px;height:1px;background:#444"></div>
<div class="a" style="left:1449px;top:843px;width:1px;height:8px;background:#444"></div>
<div class="t" style="left:1472.2px;top:841px;font-size:11px;line-height:14px;letter-spacing:-1.258px;color:#333;font-weight:400;">54%</div>
<svg style="left:1512px;top:838px" width="17" height="17" viewBox="0 0 17 17">
<rect x="5.5" y="5" width="6" height="7" fill="none" stroke="#444" stroke-width="1"/>
<path d="M8.5,0.8L6.5,2.8M8.5,0.8L10.5,2.8M8.5,16.2L6.5,14.2M8.5,16.2L10.5,14.2M0.8,8.5L2.8,6.5M0.8,8.5L2.8,10.5M16.2,8.5L14.2,6.5M16.2,8.5L14.2,10.5" stroke="#444" stroke-width="1"/></svg>
</body></html>
